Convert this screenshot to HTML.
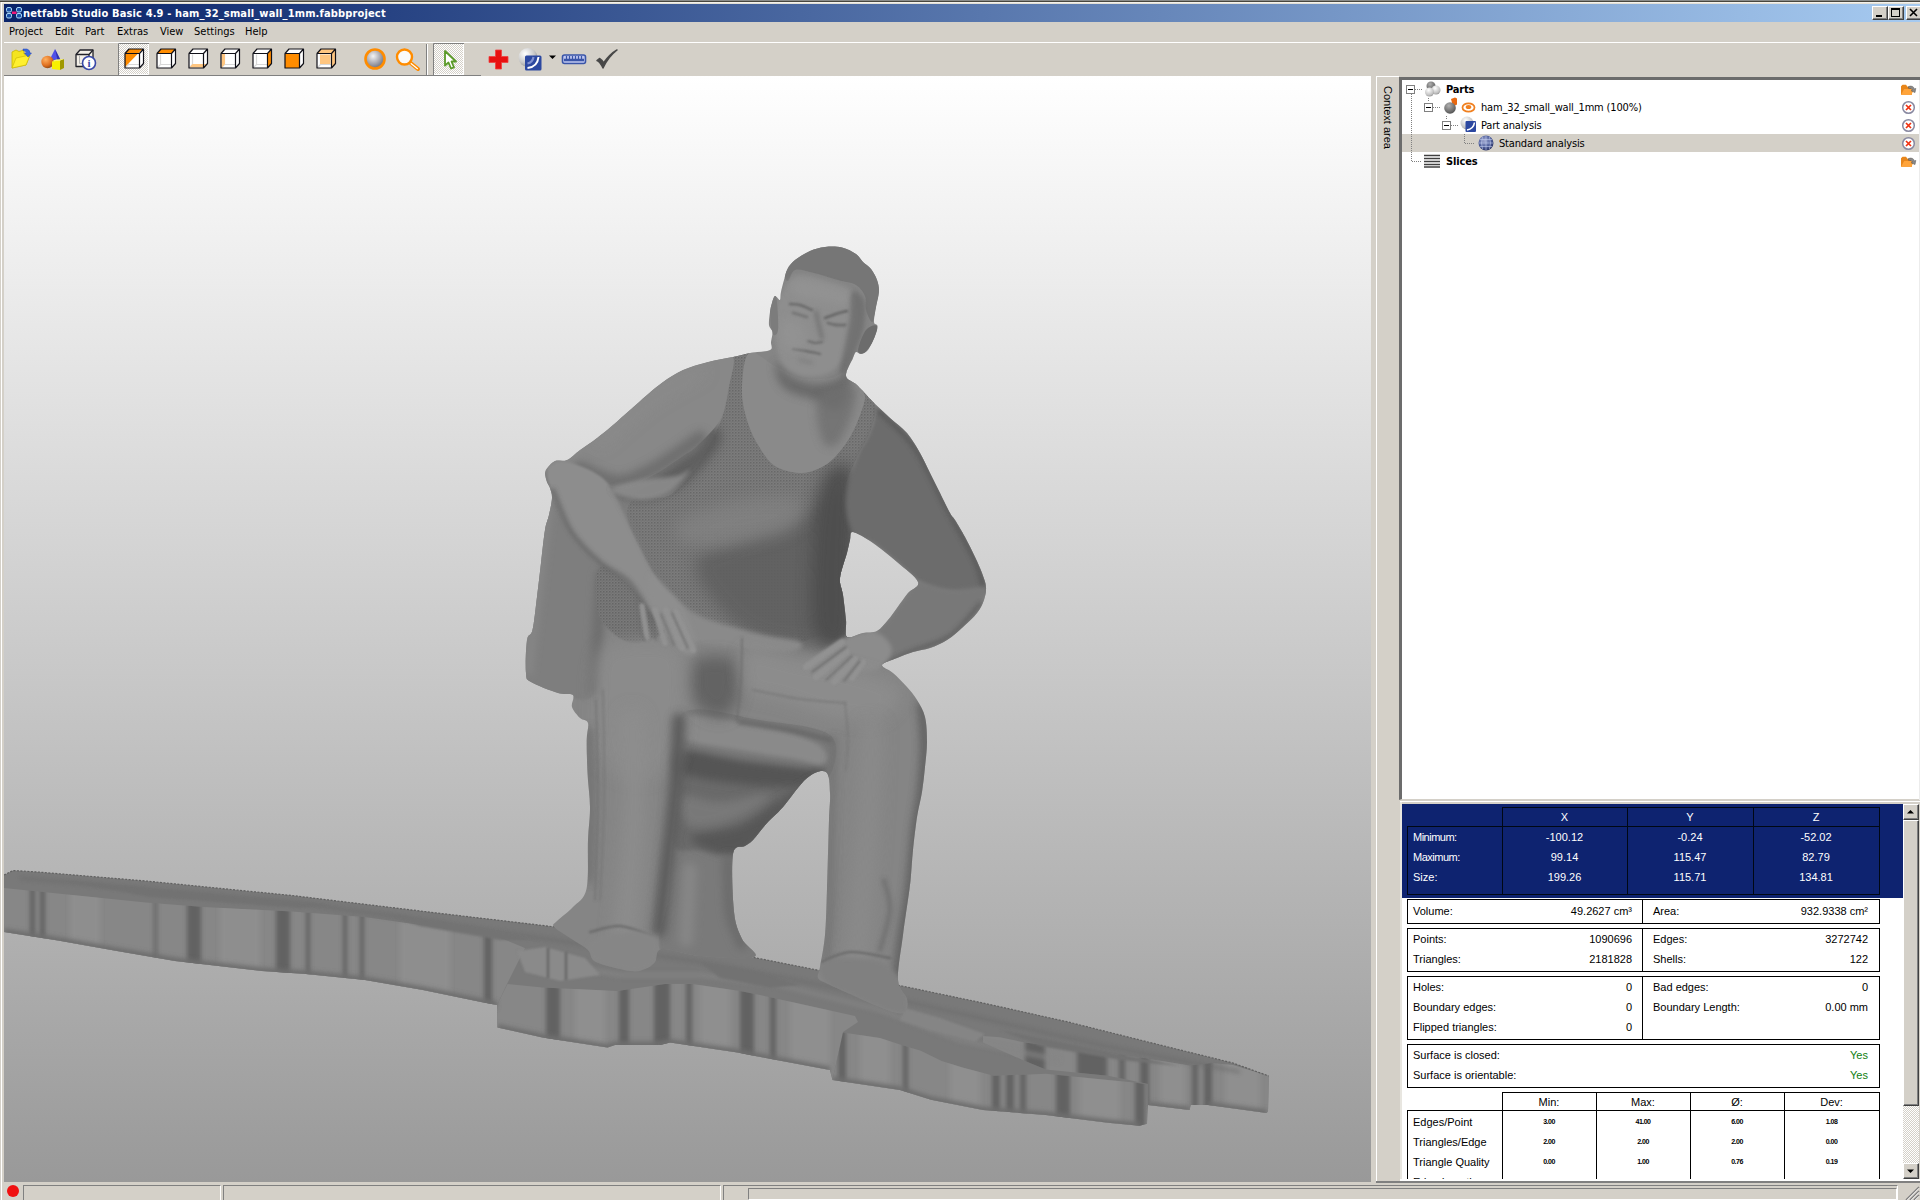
<!DOCTYPE html>
<html><head><meta charset="utf-8"><title>netfabb Studio Basic 4.9</title>
<style>
html,body{margin:0;padding:0}
body{width:1920px;height:1200px;overflow:hidden;background:#d4d0c8;position:relative;font-family:"DejaVu Sans Condensed","DejaVu Sans","Liberation Sans",sans-serif;font-size:11px;color:#000}
.a{position:absolute}
#title{left:4px;top:4px;width:1916px;height:18px;background:linear-gradient(90deg,#0a246a 0%,#0a246a 2%,#a6caf0 100%);color:#fff;font-weight:bold;font-size:11px;line-height:18px;white-space:nowrap}
#title span{position:absolute;left:19px;top:1px;letter-spacing:0.15px}
#menu{left:4px;top:22px;height:19px;line-height:20px;white-space:nowrap}
#menu span{position:absolute;top:0}
.wb{position:absolute;top:6px;width:16px;height:14px;background:#d4d0c8;box-sizing:border-box;border:1px solid;border-color:#fff #404040 #404040 #fff;box-shadow:inset -1px -1px 0 #808080}
#vp{left:4px;top:76px;width:1367px;height:1106px;background:linear-gradient(180deg,#ffffff 0%,#999999 100%);overflow:hidden}
#ctx{left:1376px;top:76px;width:23px;height:1106px;border-left:1px solid #fff;border-top:1px solid #fff;box-sizing:border-box}
#ctx span{position:absolute;left:5px;top:9px;writing-mode:vertical-rl;font-family:"Liberation Sans",sans-serif;font-size:11px;white-space:nowrap}
#tree{left:1399px;top:77px;width:521px;height:723px;background:#fff;box-sizing:border-box;border-left:3px solid #6c6c6c;border-top:3px solid #6c6c6c;border-bottom:1px solid #d4d0c8}
.row{position:absolute;left:0;width:518px;height:18px;line-height:20px;white-space:nowrap;letter-spacing:-0.16px}
.row b,.row span{position:absolute;top:0}
#ana{left:1402px;top:804px;width:501px;height:375px;background:#fff;overflow:hidden;font-family:"Liberation Sans",sans-serif;font-size:11px}
#ana div{position:absolute;box-sizing:border-box}
.bx{border:1px solid #000}
.t{white-space:nowrap;line-height:14px;height:14px}
.r{text-align:right}
.c{text-align:center}
.s{font-size:7px;font-weight:bold;letter-spacing:-0.5px}
#sb{left:1903px;top:804px;width:16px;height:375px;background:repeating-conic-gradient(#fff 0% 25%,#d4d0c8 0% 50%) 0 0/2px 2px}
.btn{position:absolute;left:0;width:16px;height:16px;background:#d4d0c8;box-sizing:border-box;border:1px solid;border-color:#fff #404040 #404040 #fff;box-shadow:inset -1px -1px 0 #808080}
.sunk{position:absolute;box-sizing:border-box;border:1px solid;border-color:#808080 #fff #fff #808080;height:17px;top:1184px}
</style></head><body>
<div class="a" style="left:0;top:0;width:1920px;height:1px;background:#8a8c8a"></div>
<div class="a" style="left:0;top:1px;width:1920px;height:1px;background:#48463e"></div>
<div class="a" style="left:1px;top:2px;width:1919px;height:1px;background:#f4f2ec"></div>
<div class="a" style="left:2px;top:3px;width:1918px;height:1px;background:#e2dfd6"></div>
<div class="a" style="left:1px;top:2px;width:1px;height:1198px;background:#fff"></div>
<div id="title" class="a"><span>netfabb Studio Basic 4.9 - ham_32_small_wall_1mm.fabbproject</span></div>
<svg class="a" style="left:6px;top:6px" width="17" height="14" viewBox="0 0 17 14"><g fill="#1c50a8" stroke="#a8d8f8" stroke-width="1"><rect x="0.5" y="1.5" width="5" height="4.5" rx="1.5"/><rect x="0.5" y="7.5" width="5" height="4.5" rx="1.5"/><rect x="10.5" y="1.5" width="5" height="4.5" rx="1.5"/><rect x="10.5" y="7.5" width="5" height="4.5" rx="1.5"/></g><rect x="6" y="5.5" width="4.5" height="2.5" fill="#f01878"/></svg><div class="wb" style="left:1872px"><svg width="14" height="12"><rect x="3" y="8" width="6" height="2" fill="#000"/></svg></div><div class="wb" style="left:1888px"><svg width="14" height="12"><rect x="2.5" y="1.5" width="8" height="8" fill="none" stroke="#000"/><rect x="2" y="1" width="9" height="2" fill="#000"/></svg></div><div class="wb" style="left:1906px"><svg width="14" height="12"><path d="M3,2 L10,9 M10,2 L3,9" stroke="#000" stroke-width="1.6"/></svg></div>
<div id="menu" class="a"><span style="left:5px">Project</span><span style="left:51px">Edit</span><span style="left:81px">Part</span><span style="left:113px">Extras</span><span style="left:156px">View</span><span style="left:190px">Settings</span><span style="left:241px">Help</span></div>
<div class="a" style="left:4px;top:42px;width:1916px;height:1px;background:#fff"></div>
<svg class="a" style="left:0;top:43px" width="700" height="33" viewBox="0 43 700 33"><defs><pattern id="chk" width="2" height="2" patternUnits="userSpaceOnUse"><rect width="2" height="2" fill="#fff"/><rect width="1" height="1" fill="#d4d0c8"/><rect x="1" y="1" width="1" height="1" fill="#d4d0c8"/></pattern><radialGradient id="gs" cx="0.4" cy="0.35" r="0.7"><stop offset="0" stop-color="#f4f4f4"/><stop offset="0.6" stop-color="#a0a0a8"/><stop offset="1" stop-color="#606878"/></radialGradient><radialGradient id="os" cx="0.35" cy="0.3" r="0.8"><stop offset="0" stop-color="#ffb060"/><stop offset="0.6" stop-color="#e07020"/><stop offset="1" stop-color="#804010"/></radialGradient><radialGradient id="ws" cx="0.35" cy="0.3" r="0.8"><stop offset="0" stop-color="#ffffff"/><stop offset="0.6" stop-color="#c8c8c8"/><stop offset="1" stop-color="#888"/></radialGradient></defs><rect x="118" y="43" width="31" height="32" fill="url(#chk)"/><path d="M118.5,75 V43.5 H149" stroke="#808080" fill="none"/><path d="M148.5,44 V74.5 H119" stroke="#fff" fill="none"/><rect x="433" y="43" width="31" height="32" fill="url(#chk)"/><path d="M433.5,75 V43.5 H464" stroke="#808080" fill="none"/><path d="M463.5,44 V74.5 H434" stroke="#fff" fill="none"/><path d="M12,52 l4,-2 l3,1.5 l5,-1.5 l0,4 l6,1 l-4,10 l-14,3 z" fill="#f4e420" stroke="#c8b400" stroke-width="0.8"/><path d="M12,68 l4,-10 l14,-3 l-4,10 z" fill="#fff030" stroke="#c8b400" stroke-width="0.6"/><path d="M23,49 l4,0 q3,1 3,4 l1.5,0 l-3.5,4 l-3.5,-4 l2,0 q0,-2 -3.5,-2.5 z" fill="#3a6ae0" stroke="#2040b0" stroke-width="0.5"/><path d="M55,49 l5.5,11 l-11,0 z" fill="#5050e8"/><path d="M55,49 l5.5,11 l-3,0 z" fill="#3030b0"/><circle cx="47.5" cy="62" r="6.2" fill="url(#os)"/><path d="M52,61.5 l8,-1 l0,9.5 l-8,-1 z" fill="#f8f000"/><path d="M60,60.5 l4,-1.5 v9 l-4,2 z" fill="#a09800"/><path d="M52,61.5 l4,-2 l8,-0.5 l-4,1.5z" fill="#fff860"/><path d="M76,54.5 l4,-4.5 h13 v12 l-4,4.5 h-13 z" fill="#f4f0e8" stroke="#202028" stroke-width="1.3" stroke-linejoin="round"/><path d="M76,54.5 h13 v12 M89,54.5 l4,-4.5" stroke="#202028" stroke-width="1.3" fill="none"/><path d="M79.5,56 v7.5 h9" stroke="#b0b0b0" fill="none"/><circle cx="89" cy="63" r="6.5" fill="#fff" stroke="#3848a8" stroke-width="1.6"/><text x="89" y="67" text-anchor="middle" font-family="Liberation Serif,serif" font-weight="bold" font-size="11" fill="#3848a8">i</text><path d="M125,53.5 l4,-4.5 h14.5 l-4,4.5 z" fill="#fff"/><path d="M139.5,53.5 l4,-4.5 v14.5 l-4,4.5 z" fill="#fff"/><path d="M125,53.5 h14.5 v14.5 h-14.5 z" fill="#fff"/><path d="M128.5,54.5 v10.0 h11.5 M128.5,64.5 l-3,3" stroke="#d8d8d8" stroke-width="1.2" fill="none"/><path d="M125,53.5 l4,-4.5 l13.5,0 L125,67.0 z" fill="#ff8c00"/><path d="M125,53.5 h14.5 v14.5 h-14.5 z M125,53.5 l4,-4.5 h14.5 v14.5 l-4,4.5 M139.5,53.5 l4,-4.5" stroke="#101018" stroke-width="1.2" fill="none" stroke-linejoin="round"/><path d="M157,53.5 l4,-4.5 h14.5 l-4,4.5 z" fill="#ff8c00"/><path d="M171.5,53.5 l4,-4.5 v14.5 l-4,4.5 z" fill="#fff"/><path d="M157,53.5 h14.5 v14.5 h-14.5 z" fill="#fff"/><path d="M160.5,54.5 v10.0 h11.5 M160.5,64.5 l-3,3" stroke="#d8d8d8" stroke-width="1.2" fill="none"/><path d="M157,53.5 h14.5 v14.5 h-14.5 z M157,53.5 l4,-4.5 h14.5 v14.5 l-4,4.5 M171.5,53.5 l4,-4.5" stroke="#101018" stroke-width="1.2" fill="none" stroke-linejoin="round"/><path d="M189,53.5 l4,-4.5 h14.5 l-4,4.5 z" fill="#fff"/><path d="M203.5,53.5 l4,-4.5 v14.5 l-4,4.5 z" fill="#fff"/><path d="M189,53.5 h14.5 v14.5 h-14.5 z" fill="#fff"/><path d="M192.5,54.5 v10.0 h11.5 M192.5,64.5 l-3,3" stroke="#d8d8d8" stroke-width="1.2" fill="none"/><path d="M189.5,67.5 l3,-3.5 h14.5 l-3,3.5 z" fill="#ffc680"/><path d="M189,53.5 h14.5 v14.5 h-14.5 z M189,53.5 l4,-4.5 h14.5 v14.5 l-4,4.5 M203.5,53.5 l4,-4.5" stroke="#101018" stroke-width="1.2" fill="none" stroke-linejoin="round"/><path d="M221,53.5 l4,-4.5 h14.5 l-4,4.5 z" fill="#fff"/><path d="M235.5,53.5 l4,-4.5 v14.5 l-4,4.5 z" fill="#fff"/><path d="M221,53.5 h14.5 v14.5 h-14.5 z" fill="#fff"/><path d="M224.5,54.5 v10.0 h11.5 M224.5,64.5 l-3,3" stroke="#d8d8d8" stroke-width="1.2" fill="none"/><path d="M221.5,54.0 l3.5,0 v10.0 l-3.5,4 z" fill="#ffc680"/><path d="M221,53.5 h14.5 v14.5 h-14.5 z M221,53.5 l4,-4.5 h14.5 v14.5 l-4,4.5 M235.5,53.5 l4,-4.5" stroke="#101018" stroke-width="1.2" fill="none" stroke-linejoin="round"/><path d="M253,53.5 l4,-4.5 h14.5 l-4,4.5 z" fill="#fff"/><path d="M267.5,53.5 l4,-4.5 v14.5 l-4,4.5 z" fill="#ff8c00"/><path d="M253,53.5 h14.5 v14.5 h-14.5 z" fill="#fff"/><path d="M256.5,54.5 v10.0 h11.5 M256.5,64.5 l-3,3" stroke="#d8d8d8" stroke-width="1.2" fill="none"/><path d="M253,53.5 h14.5 v14.5 h-14.5 z M253,53.5 l4,-4.5 h14.5 v14.5 l-4,4.5 M267.5,53.5 l4,-4.5" stroke="#101018" stroke-width="1.2" fill="none" stroke-linejoin="round"/><path d="M285,53.5 l4,-4.5 h14.5 l-4,4.5 z" fill="#fff"/><path d="M299.5,53.5 l4,-4.5 v14.5 l-4,4.5 z" fill="#fff"/><path d="M285,53.5 h14.5 v14.5 h-14.5 z" fill="#ff8c00"/><path d="M285,53.5 h14.5 v14.5 h-14.5 z M285,53.5 l4,-4.5 h14.5 v14.5 l-4,4.5 M299.5,53.5 l4,-4.5" stroke="#101018" stroke-width="1.2" fill="none" stroke-linejoin="round"/><path d="M317,53.5 l4,-4.5 h14.5 l-4,4.5 z" fill="#ffc680"/><path d="M331.5,53.5 l4,-4.5 v14.5 l-4,4.5 z" fill="#ffc680"/><path d="M317,53.5 h14.5 v14.5 h-14.5 z" fill="#fff"/><path d="M320.5,54.5 v10.0 h11.5 M320.5,64.5 l-3,3" stroke="#d8d8d8" stroke-width="1.2" fill="none"/><rect x="320" y="54.5" width="10.5" height="9.5" fill="#ffc680"/><path d="M317,53.5 h14.5 v14.5 h-14.5 z M317,53.5 l4,-4.5 h14.5 v14.5 l-4,4.5 M331.5,53.5 l4,-4.5" stroke="#101018" stroke-width="1.2" fill="none" stroke-linejoin="round"/><circle cx="375" cy="59" r="9.5" fill="url(#gs)" stroke="#ff8c00" stroke-width="2.6"/><path d="M410,62.5 L418,69" stroke="#ff8c00" stroke-width="4" stroke-linecap="round"/><path d="M411,63.5 L417.5,68.700" stroke="#fff" stroke-width="1.2" stroke-linecap="round"/><circle cx="404.5" cy="57" r="7.5" fill="#fafafa" stroke="#ff8c00" stroke-width="2.4"/><path d="M426.5,44 V75" stroke="#808080"/><path d="M427.5,44 V75" stroke="#fff"/><path d="M445,51 L445,65.5 L448.5,62.5 L451,68.5 L454,67.3 L451.5,61.5 L456,61.5 Z" fill="#fff" stroke="#5a9a28" stroke-width="1.8" stroke-linejoin="round"/><path d="M495.5,50 h6 v6.5 h6.5 v6 h-6.5 v6.5 h-6 v-6.5 h-6.5 v-6 h6.5 z" fill="#e81010" stroke="#f04040" stroke-width="0.8" stroke-linejoin="round"/><circle cx="528" cy="57.5" r="9.5" fill="url(#ws)"/><rect x="525" y="55.5" width="16.5" height="15" rx="1.5" fill="#2c48a0"/><path d="M527.5,68 q10,-1 11,-11" stroke="#fff" stroke-width="2" fill="none"/><path d="M527.5,63.5 q5,-1 6,-6.5" stroke="#8090d0" stroke-width="2.2" fill="none"/><path d="M549,55.5 h7 l-3.5,3.5 z" fill="#000"/><rect x="562.5" y="55" width="23" height="8.5" rx="2" fill="#c0c8f0" stroke="#3a55a8" stroke-width="1.6"/><path d="M564,60 h20" stroke="#3a55a8" stroke-width="2.5"/><path d="M566.5,56 v4 M569.5,56 v4 M572.5,56 v4 M575.5,56 v4 M578.5,56 v4 M581.5,56 v4" stroke="#3a55a8" stroke-width="1.2"/><path d="M597,60.5 q3,1 6,7.5 q5,-11 14,-18 q-7,4 -13.5,13 q-1.5,-3 -4,-4.5 z" fill="#484848" stroke="#484848" stroke-width="1.5" stroke-linejoin="round"/><path d="M4,75.5 H481" stroke="#808080"/></svg>
<div id="vp" class="a"><!--MODEL--><svg class="a" style="left:0;top:0" width="1367" height="1106" viewBox="4 76 1367 1106">
<defs>
<filter id="b1" filterUnits="userSpaceOnUse" x="0" y="60" width="1400" height="1140"><feGaussianBlur stdDeviation="1"/></filter>
<filter id="b2" filterUnits="userSpaceOnUse" x="0" y="60" width="1400" height="1140"><feGaussianBlur stdDeviation="2"/></filter>
<filter id="b4" filterUnits="userSpaceOnUse" x="0" y="60" width="1400" height="1140"><feGaussianBlur stdDeviation="4"/></filter>
<filter id="b8" filterUnits="userSpaceOnUse" x="0" y="60" width="1400" height="1140"><feGaussianBlur stdDeviation="8"/></filter>
<filter id="b12" filterUnits="userSpaceOnUse" x="0" y="60" width="1400" height="1140"><feGaussianBlur stdDeviation="12"/></filter>
<pattern id="tex" width="3" height="3" patternUnits="userSpaceOnUse"><rect width="3" height="3" fill="#808080"/><rect x="0" y="0" width="1.5" height="1.5" fill="#5a5a5a"/><rect x="1.5" y="1.5" width="1.5" height="1" fill="#6c6c6c"/></pattern>
</defs>
<linearGradient id="wg" x1="0" y1="0" x2="0" y2="1"><stop offset="0" stop-color="#8e8e8e"/><stop offset="0.7" stop-color="#8a8a8a"/><stop offset="1" stop-color="#7c7c7c"/></linearGradient>
<path d="M4.0,875.0L13.0,870.5L38.0,872.0L146.0,881.0L292.0,895.5L437.0,913.0L560.0,927.5L654.0,944.0L754.0,957.5L822.0,971.0L902.0,986.0L983.0,1003.0L1067.0,1021.7L1150.0,1042.5L1233.0,1063.0L1268.8,1076.0L1268.0,1111.0L1266.7,1113.0L1208.0,1105.0L1190.6,1105.0L1189.6,1110.0L1148.0,1105.0L1147.0,1123.8L1139.6,1125.8L1108.0,1122.7L1045.8,1115.0L983.0,1110.0L931.0,1099.8L900.0,1090.0L832.5,1080.0L830.0,1070.0L750.0,1055.0L737.5,1052.5L670.0,1042.5L660.0,1045.0L615.0,1045.0L607.5,1047.5L542.5,1037.5L497.5,1027.5L497.0,1005.0L481.0,1002.0L423.0,990.0L365.0,980.0L306.0,974.0L262.0,971.0L175.0,961.0L117.0,951.0L58.0,940.5L4.0,932.0Z" fill="#797979"/>
<clipPath id="cw"><path d="M4.0,888.0L146.0,902.5L204.0,907.0L292.0,911.5L365.0,917.0L496.0,936.0L525.0,948.0L507.0,984.0L497.0,1005.0L481.0,1002.0L423.0,990.0L365.0,980.0L306.0,974.0L262.0,971.0L175.0,961.0L117.0,951.0L58.0,940.5L4.0,932.0Z M507.5,984.0L542.5,987.5L617.5,991.0L665.0,984.0L692.5,984.0L740.0,991.0L760.0,995.0L855.0,1016.0L858.0,1022.0L843.0,1032.0L832.5,1080.0L830.0,1070.0L750.0,1055.0L737.5,1052.5L670.0,1042.5L660.0,1045.0L615.0,1045.0L607.5,1047.5L542.5,1037.5L497.5,1027.5L497.0,1005.0Z M983.0,1036.0L1000.0,1037.3L1025.0,1042.5L1073.0,1048.8L1116.7,1054.0L1150.0,1059.0L1189.6,1065.4L1212.5,1063.0L1233.0,1065.0L1268.8,1076.0L1268.0,1111.0L1266.7,1113.0L1208.0,1105.0L1190.6,1105.0L1189.6,1110.0L1148.0,1105.0L1148.0,1084.0L1129.0,1080.0L1108.0,1075.8L1045.8,1069.6L1025.0,1061.0L983.0,1042.5Z M843.0,1032.5L880.0,1038.0L900.0,1044.6L920.8,1050.8L941.7,1061.0L962.5,1067.5L993.8,1075.8L1045.8,1073.8L1108.0,1080.0L1129.0,1082.0L1145.8,1084.0L1147.0,1123.8L1139.6,1125.8L1108.0,1122.7L1045.8,1115.0L983.0,1110.0L931.0,1099.8L900.0,1090.0L832.5,1080.0Z"/></clipPath>
<clipPath id="cw0"><path d="M4.0,888.0L146.0,902.5L204.0,907.0L292.0,911.5L365.0,917.0L496.0,936.0L525.0,948.0L507.0,984.0L497.0,1005.0L481.0,1002.0L423.0,990.0L365.0,980.0L306.0,974.0L262.0,971.0L175.0,961.0L117.0,951.0L58.0,940.5L4.0,932.0Z"/></clipPath>
<path d="M4.0,888.0L146.0,902.5L204.0,907.0L292.0,911.5L365.0,917.0L496.0,936.0L525.0,948.0L507.0,984.0L497.0,1005.0L481.0,1002.0L423.0,990.0L365.0,980.0L306.0,974.0L262.0,971.0L175.0,961.0L117.0,951.0L58.0,940.5L4.0,932.0Z" fill="#878787"/><g clip-path="url(#cw0)"><g filter="url(#b2)"><rect x="30" y="880" width="5" height="130" fill="#5c5c5c" opacity="0.85"/><rect x="40" y="880" width="5" height="130" fill="#5c5c5c" opacity="0.85"/><rect x="154" y="880" width="3" height="130" fill="#5c5c5c" opacity="0.85"/><rect x="187" y="880" width="14" height="130" fill="#5c5c5c" opacity="0.85"/><rect x="276" y="880" width="14" height="130" fill="#5c5c5c" opacity="0.85"/><rect x="306" y="880" width="4" height="130" fill="#5c5c5c" opacity="0.85"/><rect x="343" y="880" width="4" height="130" fill="#5c5c5c" opacity="0.85"/><rect x="360" y="880" width="4" height="130" fill="#5c5c5c" opacity="0.85"/><rect x="484" y="880" width="8" height="130" fill="#5c5c5c" opacity="0.85"/><rect x="70" y="880" width="30" height="130" fill="#969696" opacity="0.5"/><rect x="220" y="880" width="40" height="130" fill="#969696" opacity="0.5"/><rect x="400" y="880" width="50" height="130" fill="#969696" opacity="0.5"/></g></g>
<clipPath id="cw1"><path d="M507.5,984.0L542.5,987.5L617.5,991.0L665.0,984.0L692.5,984.0L740.0,991.0L760.0,995.0L855.0,1016.0L858.0,1022.0L843.0,1032.0L832.5,1080.0L830.0,1070.0L750.0,1055.0L737.5,1052.5L670.0,1042.5L660.0,1045.0L615.0,1045.0L607.5,1047.5L542.5,1037.5L497.5,1027.5L497.0,1005.0Z"/></clipPath>
<path d="M507.5,984.0L542.5,987.5L617.5,991.0L665.0,984.0L692.5,984.0L740.0,991.0L760.0,995.0L855.0,1016.0L858.0,1022.0L843.0,1032.0L832.5,1080.0L830.0,1070.0L750.0,1055.0L737.5,1052.5L670.0,1042.5L660.0,1045.0L615.0,1045.0L607.5,1047.5L542.5,1037.5L497.5,1027.5L497.0,1005.0Z" fill="#878787"/><g clip-path="url(#cw1)"><g filter="url(#b2)"><rect x="546" y="975" width="14" height="110" fill="#5c5c5c" opacity="0.85"/><rect x="619" y="975" width="10" height="110" fill="#5c5c5c" opacity="0.85"/><rect x="654" y="975" width="16" height="110" fill="#5c5c5c" opacity="0.85"/><rect x="686" y="975" width="6" height="110" fill="#5c5c5c" opacity="0.85"/><rect x="740" y="975" width="14" height="110" fill="#5c5c5c" opacity="0.85"/><rect x="770" y="975" width="6" height="110" fill="#5c5c5c" opacity="0.85"/><rect x="575" y="975" width="30" height="110" fill="#969696" opacity="0.5"/><rect x="700" y="975" width="30" height="110" fill="#969696" opacity="0.5"/><rect x="790" y="975" width="40" height="110" fill="#969696" opacity="0.5"/></g></g>
<clipPath id="cw2"><path d="M983.0,1036.0L1000.0,1037.3L1025.0,1042.5L1073.0,1048.8L1116.7,1054.0L1150.0,1059.0L1189.6,1065.4L1212.5,1063.0L1233.0,1065.0L1268.8,1076.0L1268.0,1111.0L1266.7,1113.0L1208.0,1105.0L1190.6,1105.0L1189.6,1110.0L1148.0,1105.0L1148.0,1084.0L1129.0,1080.0L1108.0,1075.8L1045.8,1069.6L1025.0,1061.0L983.0,1042.5Z"/></clipPath>
<path d="M983.0,1036.0L1000.0,1037.3L1025.0,1042.5L1073.0,1048.8L1116.7,1054.0L1150.0,1059.0L1189.6,1065.4L1212.5,1063.0L1233.0,1065.0L1268.8,1076.0L1268.0,1111.0L1266.7,1113.0L1208.0,1105.0L1190.6,1105.0L1189.6,1110.0L1148.0,1105.0L1148.0,1084.0L1129.0,1080.0L1108.0,1075.8L1045.8,1069.6L1025.0,1061.0L983.0,1042.5Z" fill="#878787"/><g clip-path="url(#cw2)"><g filter="url(#b2)"><rect x="1025" y="1030" width="20" height="90" fill="#5c5c5c" opacity="0.85"/><rect x="1077" y="1030" width="30" height="90" fill="#5c5c5c" opacity="0.85"/><rect x="1119" y="1030" width="6" height="90" fill="#5c5c5c" opacity="0.85"/><rect x="1140" y="1030" width="9" height="90" fill="#5c5c5c" opacity="0.85"/><rect x="1192" y="1030" width="6" height="90" fill="#5c5c5c" opacity="0.85"/><rect x="1204" y="1030" width="8" height="90" fill="#5c5c5c" opacity="0.85"/><rect x="1160" y="1030" width="25" height="90" fill="#969696" opacity="0.5"/><rect x="1225" y="1030" width="35" height="90" fill="#969696" opacity="0.5"/></g></g>
<clipPath id="cw3"><path d="M843.0,1032.5L880.0,1038.0L900.0,1044.6L920.8,1050.8L941.7,1061.0L962.5,1067.5L993.8,1075.8L1045.8,1073.8L1108.0,1080.0L1129.0,1082.0L1145.8,1084.0L1147.0,1123.8L1139.6,1125.8L1108.0,1122.7L1045.8,1115.0L983.0,1110.0L931.0,1099.8L900.0,1090.0L832.5,1080.0Z"/></clipPath>
<path d="M843.0,1032.5L880.0,1038.0L900.0,1044.6L920.8,1050.8L941.7,1061.0L962.5,1067.5L993.8,1075.8L1045.8,1073.8L1108.0,1080.0L1129.0,1082.0L1145.8,1084.0L1147.0,1123.8L1139.6,1125.8L1108.0,1122.7L1045.8,1115.0L983.0,1110.0L931.0,1099.8L900.0,1090.0L832.5,1080.0Z" fill="#878787"/><g clip-path="url(#cw3)"><g filter="url(#b2)"><rect x="838" y="1030" width="8" height="100" fill="#5c5c5c" opacity="0.85"/><rect x="903" y="1030" width="5" height="100" fill="#5c5c5c" opacity="0.85"/><rect x="992" y="1030" width="8" height="100" fill="#5c5c5c" opacity="0.85"/><rect x="1006" y="1030" width="8" height="100" fill="#5c5c5c" opacity="0.85"/><rect x="1020" y="1030" width="6" height="100" fill="#5c5c5c" opacity="0.85"/><rect x="1056" y="1030" width="14" height="100" fill="#5c5c5c" opacity="0.85"/><rect x="1135" y="1030" width="10" height="100" fill="#5c5c5c" opacity="0.85"/><rect x="860" y="1030" width="30" height="100" fill="#969696" opacity="0.5"/><rect x="950" y="1030" width="30" height="100" fill="#969696" opacity="0.5"/><rect x="1080" y="1030" width="40" height="100" fill="#969696" opacity="0.5"/></g></g>
<g clip-path="url(#cw)"><path d="M4,932L58,940.5L117,951L175,961L262,971L306,974L365,980L423,990L481,1002L497,1005 M497.5,1027.5L542.5,1037.5L607.5,1047.5L615,1045L660,1045L670,1042.5L737.5,1052.5L750,1055L830,1070 M832.5,1080L900,1090L931,1099.8L983,1110L1045.8,1115L1108,1122.7L1139.6,1125.8 M1148,1105L1189.6,1110 M1208,1105L1266.7,1113" stroke="#6e6e6e" stroke-width="7" fill="none" filter="url(#b2)"/></g>
<g filter="url(#b2)" opacity="0.7"><path d="M20,878L300,903L520,935L700,962L900,1000L1100,1045L1240,1072" stroke="#6c6c6c" stroke-width="3" fill="none"/><path d="M530,960L620,975L700,975L780,985L880,1010L960,1040L1060,1060" stroke="#858585" stroke-width="5" fill="none"/></g>
<g filter="url(#b1)"><path d="M517,951L545,947L585,958L600,975L560,981L525,972Z" fill="#8a8a8a"/><path d="M548,948v30M566,952v28" stroke="#666" stroke-width="2.5"/><path d="M905,1008L940,1018L985,1034L975,1042L930,1030L900,1020Z" fill="#858585"/><path d="M700,962L760,972L800,985L770,988L720,978Z" fill="#727272"/><path d="M60,880L200,893L330,905L300,908L150,897Z" fill="#727272"/><path d="M380,912L470,926L540,940L500,940L420,926Z" fill="#737373"/><path d="M1000,1030L1080,1046L1180,1066L1120,1060L1040,1046Z" fill="#727272"/></g>
<path d="M4,875L13,870.5L38,872L146,881L292,895.5L437,913L560,927.5L654,944L754,957.5L822,971L902,986L983,1003L1067,1021.7L1150,1042.5L1233,1063L1268.75,1076" stroke="#606060" stroke-width="1.2" fill="none" stroke-dasharray="2,1.5"/>
<path d="M825.0,247.0C830.3,246.4 836.8,246.3 842.0,247.5C847.2,248.7 852.5,251.6 856.0,254.0C859.5,256.4 860.5,259.5 863.0,262.0C865.5,264.5 868.7,266.0 871.0,269.0C873.3,272.0 875.7,276.2 877.0,280.0C878.3,283.8 879.2,287.5 879.0,292.0C878.8,296.5 876.8,302.0 876.0,307.0C875.2,312.0 873.8,318.8 874.0,322.0C874.2,325.2 877.3,323.7 877.5,326.0C877.7,328.3 876.6,332.0 875.0,336.0C873.4,340.0 870.3,347.0 868.0,350.0C865.7,353.0 863.0,353.7 861.0,354.0C859.0,354.3 857.3,351.3 856.0,352.0C854.7,352.7 854.7,354.0 853.0,358.0C851.3,362.0 845.3,371.5 846.0,376.0C846.7,380.5 852.5,380.7 857.0,385.0C861.5,389.3 867.5,396.5 873.0,402.0C878.5,407.5 884.3,412.8 890.0,418.0C895.7,423.2 902.0,427.2 907.0,433.0C912.0,438.8 916.2,446.3 920.0,453.0C923.8,459.7 926.7,466.3 930.0,473.0C933.3,479.7 936.7,486.3 940.0,493.0C943.3,499.7 947.5,508.5 950.0,513.0C952.5,517.5 952.5,516.0 955.0,520.0C957.5,524.0 961.7,530.8 965.0,537.0C968.3,543.2 972.2,551.0 975.0,557.0C977.8,563.0 980.2,568.0 982.0,573.0C983.8,578.0 985.7,582.5 986.0,587.0C986.3,591.5 985.5,595.7 984.0,600.0C982.5,604.3 980.5,608.5 977.0,613.0C973.5,617.5 968.0,622.5 963.0,627.0C958.0,631.5 952.5,636.5 947.0,640.0C941.5,643.5 935.7,646.0 930.0,648.0C924.3,650.0 918.5,650.3 913.0,652.0C907.5,653.7 902.2,655.8 897.0,658.0C891.8,660.2 882.7,662.5 882.0,665.0C881.3,667.5 888.8,669.3 893.0,673.0C897.2,676.7 903.0,682.5 907.0,687.0C911.0,691.5 914.0,695.0 917.0,700.0C920.0,705.0 923.3,710.0 925.0,717.0C926.7,724.0 927.0,733.7 927.0,742.0C927.0,750.3 925.8,758.7 925.0,767.0C924.2,775.3 923.3,783.7 922.0,792.0C920.7,800.3 918.5,807.3 917.0,817.0C915.5,826.7 914.0,840.3 913.0,850.0C912.0,859.7 911.6,868.5 911.0,875.0C910.4,881.5 910.8,879.0 909.5,889.0C908.2,899.0 904.9,919.8 903.0,935.0C901.1,950.2 897.3,969.3 898.0,980.0C898.7,990.7 905.8,993.7 907.0,999.0C908.2,1004.3 907.3,1009.8 905.0,1012.0C902.7,1014.2 898.8,1013.5 893.0,1012.0C887.2,1010.5 877.2,1006.0 870.0,1003.0C862.8,1000.0 857.0,997.2 850.0,994.0C843.0,990.8 833.3,986.7 828.0,984.0C822.7,981.3 819.3,980.8 818.0,978.0C816.7,975.2 818.8,974.2 820.0,967.0C821.2,959.8 823.8,948.0 825.0,935.0C826.2,922.0 826.3,908.2 827.0,889.0C827.7,869.8 828.5,836.0 829.0,820.0C829.5,804.0 830.5,801.0 830.0,793.0C829.5,785.0 829.8,774.5 826.0,772.0C822.2,769.5 814.2,772.2 807.0,778.0C799.8,783.8 789.7,799.5 783.0,807.0C776.3,814.5 772.0,817.5 767.0,823.0C762.0,828.5 756.7,836.2 753.0,840.0C749.3,843.8 748.3,843.7 745.0,846.0C741.7,848.3 734.8,843.0 733.0,854.0C731.2,865.0 732.5,897.8 734.0,912.0C735.5,926.2 738.7,931.5 742.0,939.0C745.3,946.5 761.0,954.2 754.0,957.0C747.0,959.8 715.3,957.3 700.0,956.0C684.7,954.7 669.5,948.0 662.0,949.0C654.5,950.0 657.8,958.7 655.0,962.0C652.2,965.3 649.2,967.5 645.0,969.0C640.8,970.5 638.2,972.2 630.0,971.0C621.8,969.8 603.0,965.5 596.0,962.0C589.0,958.5 592.3,954.0 588.0,950.0C583.7,946.0 575.7,941.8 570.0,938.0C564.3,934.2 556.2,929.8 554.0,927.0C551.8,924.2 553.8,924.3 557.0,921.0C560.2,917.7 568.1,912.3 573.0,907.0C577.9,901.7 584.0,900.2 586.5,889.0C589.0,877.8 587.4,853.7 588.0,840.0C588.6,826.3 590.1,818.2 590.0,807.0C589.9,795.8 588.0,784.2 587.5,773.0C587.0,761.8 586.6,748.3 586.7,740.0C586.8,731.7 589.1,726.7 588.0,723.0C586.9,719.3 582.7,720.7 580.0,718.0C577.3,715.3 573.2,710.8 572.0,707.0C570.8,703.2 575.3,697.3 573.0,695.0C570.7,692.7 565.0,695.2 558.0,693.0C551.0,690.8 536.3,685.3 531.0,682.0C525.7,678.7 526.7,680.0 526.0,673.0C525.3,666.0 525.9,647.2 527.0,640.0C528.1,632.8 530.8,637.2 532.5,630.0C534.2,622.8 535.6,608.2 537.0,597.0C538.4,585.8 539.7,574.2 541.0,563.0C542.3,551.8 543.7,538.0 545.0,530.0C546.3,522.0 547.8,520.3 549.0,515.0C550.2,509.7 551.8,502.5 552.0,498.0C552.2,493.5 550.8,490.7 550.0,488.0C549.2,485.3 547.8,484.5 547.0,482.0C546.2,479.5 544.8,475.5 545.0,473.0C545.2,470.5 546.3,469.0 548.0,467.0C549.7,465.0 551.8,462.2 555.0,461.0C558.2,459.8 562.8,461.8 567.0,460.0C571.2,458.2 575.0,453.7 580.0,450.0C585.0,446.3 591.5,442.2 597.0,438.0C602.5,433.8 607.5,429.7 613.0,425.0C618.5,420.3 624.3,415.0 630.0,410.0C635.7,405.0 641.5,399.7 647.0,395.0C652.5,390.3 657.0,386.2 663.0,382.0C669.0,377.8 675.5,373.3 683.0,370.0C690.5,366.7 699.7,364.2 708.0,362.0C716.3,359.8 726.0,358.5 733.0,357.0C740.0,355.5 743.8,354.2 750.0,353.0C756.2,351.8 766.5,351.8 770.0,350.0C773.5,348.2 770.6,345.0 771.0,342.0C771.4,339.0 772.8,334.8 772.5,332.0C772.2,329.2 769.4,328.3 769.0,325.0C768.6,321.7 769.5,315.7 770.0,312.0C770.5,308.3 771.2,305.7 772.0,303.0C772.8,300.3 773.7,296.5 775.0,296.0C776.3,295.5 779.0,300.7 780.0,300.0C781.0,299.3 780.3,295.3 781.0,292.0C781.7,288.7 782.9,283.8 784.0,280.0C785.1,276.2 785.7,272.3 787.5,269.0C789.3,265.7 791.2,263.0 795.0,260.0C798.8,257.0 805.0,253.2 810.0,251.0C815.0,248.8 819.7,247.6 825.0,247.0Z M853.0,532.0C856.8,532.5 865.7,538.0 873.0,543.0C880.3,548.0 889.5,555.5 897.0,562.0C904.5,568.5 916.2,576.8 918.0,582.0C919.8,587.2 911.5,588.7 908.0,593.0C904.5,597.3 900.3,603.5 897.0,608.0C893.7,612.5 891.3,616.2 888.0,620.0C884.7,623.8 881.2,628.8 877.0,631.0C872.8,633.2 868.0,632.0 863.0,633.0C858.0,634.0 849.8,639.2 847.0,637.0C844.2,634.8 846.7,627.0 846.0,620.0C845.3,613.0 844.0,602.0 843.0,595.0C842.0,588.0 839.3,585.0 840.0,578.0C840.7,571.0 845.3,559.3 847.0,553.0C848.7,546.7 849.0,543.5 850.0,540.0C851.0,536.5 849.2,531.5 853.0,532.0Z" fill="#858585" fill-rule="evenodd"/>
<clipPath id="cf"><path d="M825.0,247.0C830.3,246.4 836.8,246.3 842.0,247.5C847.2,248.7 852.5,251.6 856.0,254.0C859.5,256.4 860.5,259.5 863.0,262.0C865.5,264.5 868.7,266.0 871.0,269.0C873.3,272.0 875.7,276.2 877.0,280.0C878.3,283.8 879.2,287.5 879.0,292.0C878.8,296.5 876.8,302.0 876.0,307.0C875.2,312.0 873.8,318.8 874.0,322.0C874.2,325.2 877.3,323.7 877.5,326.0C877.7,328.3 876.6,332.0 875.0,336.0C873.4,340.0 870.3,347.0 868.0,350.0C865.7,353.0 863.0,353.7 861.0,354.0C859.0,354.3 857.3,351.3 856.0,352.0C854.7,352.7 854.7,354.0 853.0,358.0C851.3,362.0 845.3,371.5 846.0,376.0C846.7,380.5 852.5,380.7 857.0,385.0C861.5,389.3 867.5,396.5 873.0,402.0C878.5,407.5 884.3,412.8 890.0,418.0C895.7,423.2 902.0,427.2 907.0,433.0C912.0,438.8 916.2,446.3 920.0,453.0C923.8,459.7 926.7,466.3 930.0,473.0C933.3,479.7 936.7,486.3 940.0,493.0C943.3,499.7 947.5,508.5 950.0,513.0C952.5,517.5 952.5,516.0 955.0,520.0C957.5,524.0 961.7,530.8 965.0,537.0C968.3,543.2 972.2,551.0 975.0,557.0C977.8,563.0 980.2,568.0 982.0,573.0C983.8,578.0 985.7,582.5 986.0,587.0C986.3,591.5 985.5,595.7 984.0,600.0C982.5,604.3 980.5,608.5 977.0,613.0C973.5,617.5 968.0,622.5 963.0,627.0C958.0,631.5 952.5,636.5 947.0,640.0C941.5,643.5 935.7,646.0 930.0,648.0C924.3,650.0 918.5,650.3 913.0,652.0C907.5,653.7 902.2,655.8 897.0,658.0C891.8,660.2 882.7,662.5 882.0,665.0C881.3,667.5 888.8,669.3 893.0,673.0C897.2,676.7 903.0,682.5 907.0,687.0C911.0,691.5 914.0,695.0 917.0,700.0C920.0,705.0 923.3,710.0 925.0,717.0C926.7,724.0 927.0,733.7 927.0,742.0C927.0,750.3 925.8,758.7 925.0,767.0C924.2,775.3 923.3,783.7 922.0,792.0C920.7,800.3 918.5,807.3 917.0,817.0C915.5,826.7 914.0,840.3 913.0,850.0C912.0,859.7 911.6,868.5 911.0,875.0C910.4,881.5 910.8,879.0 909.5,889.0C908.2,899.0 904.9,919.8 903.0,935.0C901.1,950.2 897.3,969.3 898.0,980.0C898.7,990.7 905.8,993.7 907.0,999.0C908.2,1004.3 907.3,1009.8 905.0,1012.0C902.7,1014.2 898.8,1013.5 893.0,1012.0C887.2,1010.5 877.2,1006.0 870.0,1003.0C862.8,1000.0 857.0,997.2 850.0,994.0C843.0,990.8 833.3,986.7 828.0,984.0C822.7,981.3 819.3,980.8 818.0,978.0C816.7,975.2 818.8,974.2 820.0,967.0C821.2,959.8 823.8,948.0 825.0,935.0C826.2,922.0 826.3,908.2 827.0,889.0C827.7,869.8 828.5,836.0 829.0,820.0C829.5,804.0 830.5,801.0 830.0,793.0C829.5,785.0 829.8,774.5 826.0,772.0C822.2,769.5 814.2,772.2 807.0,778.0C799.8,783.8 789.7,799.5 783.0,807.0C776.3,814.5 772.0,817.5 767.0,823.0C762.0,828.5 756.7,836.2 753.0,840.0C749.3,843.8 748.3,843.7 745.0,846.0C741.7,848.3 734.8,843.0 733.0,854.0C731.2,865.0 732.5,897.8 734.0,912.0C735.5,926.2 738.7,931.5 742.0,939.0C745.3,946.5 761.0,954.2 754.0,957.0C747.0,959.8 715.3,957.3 700.0,956.0C684.7,954.7 669.5,948.0 662.0,949.0C654.5,950.0 657.8,958.7 655.0,962.0C652.2,965.3 649.2,967.5 645.0,969.0C640.8,970.5 638.2,972.2 630.0,971.0C621.8,969.8 603.0,965.5 596.0,962.0C589.0,958.5 592.3,954.0 588.0,950.0C583.7,946.0 575.7,941.8 570.0,938.0C564.3,934.2 556.2,929.8 554.0,927.0C551.8,924.2 553.8,924.3 557.0,921.0C560.2,917.7 568.1,912.3 573.0,907.0C577.9,901.7 584.0,900.2 586.5,889.0C589.0,877.8 587.4,853.7 588.0,840.0C588.6,826.3 590.1,818.2 590.0,807.0C589.9,795.8 588.0,784.2 587.5,773.0C587.0,761.8 586.6,748.3 586.7,740.0C586.8,731.7 589.1,726.7 588.0,723.0C586.9,719.3 582.7,720.7 580.0,718.0C577.3,715.3 573.2,710.8 572.0,707.0C570.8,703.2 575.3,697.3 573.0,695.0C570.7,692.7 565.0,695.2 558.0,693.0C551.0,690.8 536.3,685.3 531.0,682.0C525.7,678.7 526.7,680.0 526.0,673.0C525.3,666.0 525.9,647.2 527.0,640.0C528.1,632.8 530.8,637.2 532.5,630.0C534.2,622.8 535.6,608.2 537.0,597.0C538.4,585.8 539.7,574.2 541.0,563.0C542.3,551.8 543.7,538.0 545.0,530.0C546.3,522.0 547.8,520.3 549.0,515.0C550.2,509.7 551.8,502.5 552.0,498.0C552.2,493.5 550.8,490.7 550.0,488.0C549.2,485.3 547.8,484.5 547.0,482.0C546.2,479.5 544.8,475.5 545.0,473.0C545.2,470.5 546.3,469.0 548.0,467.0C549.7,465.0 551.8,462.2 555.0,461.0C558.2,459.8 562.8,461.8 567.0,460.0C571.2,458.2 575.0,453.7 580.0,450.0C585.0,446.3 591.5,442.2 597.0,438.0C602.5,433.8 607.5,429.7 613.0,425.0C618.5,420.3 624.3,415.0 630.0,410.0C635.7,405.0 641.5,399.7 647.0,395.0C652.5,390.3 657.0,386.2 663.0,382.0C669.0,377.8 675.5,373.3 683.0,370.0C690.5,366.7 699.7,364.2 708.0,362.0C716.3,359.8 726.0,358.5 733.0,357.0C740.0,355.5 743.8,354.2 750.0,353.0C756.2,351.8 766.5,351.8 770.0,350.0C773.5,348.2 770.6,345.0 771.0,342.0C771.4,339.0 772.8,334.8 772.5,332.0C772.2,329.2 769.4,328.3 769.0,325.0C768.6,321.7 769.5,315.7 770.0,312.0C770.5,308.3 771.2,305.7 772.0,303.0C772.8,300.3 773.7,296.5 775.0,296.0C776.3,295.5 779.0,300.7 780.0,300.0C781.0,299.3 780.3,295.3 781.0,292.0C781.7,288.7 782.9,283.8 784.0,280.0C785.1,276.2 785.7,272.3 787.5,269.0C789.3,265.7 791.2,263.0 795.0,260.0C798.8,257.0 805.0,253.2 810.0,251.0C815.0,248.8 819.7,247.6 825.0,247.0Z M853.0,532.0C856.8,532.5 865.7,538.0 873.0,543.0C880.3,548.0 889.5,555.5 897.0,562.0C904.5,568.5 916.2,576.8 918.0,582.0C919.8,587.2 911.5,588.7 908.0,593.0C904.5,597.3 900.3,603.5 897.0,608.0C893.7,612.5 891.3,616.2 888.0,620.0C884.7,623.8 881.2,628.8 877.0,631.0C872.8,633.2 868.0,632.0 863.0,633.0C858.0,634.0 849.8,639.2 847.0,637.0C844.2,634.8 846.7,627.0 846.0,620.0C845.3,613.0 844.0,602.0 843.0,595.0C842.0,588.0 839.3,585.0 840.0,578.0C840.7,571.0 845.3,559.3 847.0,553.0C848.7,546.7 849.0,543.5 850.0,540.0C851.0,536.5 849.2,531.5 853.0,532.0Z" clip-rule="evenodd"/></clipPath>
<g clip-path="url(#cf)"><path d="M548.0,470.0C558.0,457.5 584.7,480.0 600.0,485.0C615.3,490.0 638.0,485.8 640.0,500.0C642.0,514.2 618.7,546.7 612.0,570.0C605.3,593.3 603.0,619.2 600.0,640.0C597.0,660.8 600.7,685.8 594.0,695.0C587.3,704.2 571.0,697.2 560.0,695.0C549.0,692.8 534.0,687.8 528.0,682.0C522.0,676.2 522.0,680.3 524.0,660.0C526.0,639.7 536.0,591.7 540.0,560.0C544.0,528.3 538.0,482.5 548.0,470.0Z" fill="#7e7e7e" filter="url(#b1)"/><path d="M549.0,500.0C547.7,510.5 543.7,541.3 541.0,563.0C538.3,584.7 535.2,611.8 533.0,630.0C530.8,648.2 528.8,665.0 528.0,672.0" fill="none" stroke="#8a8a8a" stroke-width="6" stroke-linecap="round" filter="url(#b4)"/><path d="M602.0,575.0C600.7,594.2 595.3,670.8 594.0,690.0" fill="none" stroke="#6e6e6e" stroke-width="12" stroke-linecap="round" filter="url(#b4)"/><path d="M684.0,712.0C697.3,703.7 735.7,716.2 760.0,720.0C784.3,723.8 818.3,725.8 830.0,735.0C841.7,744.2 834.2,767.2 830.0,775.0C825.8,782.8 812.8,776.2 805.0,782.0C797.2,787.8 790.5,801.0 783.0,810.0C775.5,819.0 768.0,828.8 760.0,836.0C752.0,843.2 739.0,840.3 735.0,853.0C731.0,865.7 734.3,897.5 736.0,912.0C737.7,926.5 741.7,932.3 745.0,940.0C748.3,947.7 763.5,955.0 756.0,958.0C748.5,961.0 716.0,959.3 700.0,958.0C684.0,956.7 665.3,959.7 660.0,950.0C654.7,940.3 666.0,916.7 668.0,900.0C670.0,883.3 670.0,871.7 672.0,850.0C674.0,828.3 678.0,793.0 680.0,770.0C682.0,747.0 670.7,720.3 684.0,712.0Z" fill="#7a7a7a"/><path d="M680.0,756.0C690.3,750.0 720.0,761.7 740.0,764.0C760.0,766.3 785.7,768.7 800.0,770.0C814.3,771.3 825.2,769.7 826.0,772.0C826.8,774.3 812.2,777.7 805.0,784.0C797.8,790.3 790.5,801.3 783.0,810.0C775.5,818.7 768.0,828.8 760.0,836.0C752.0,843.2 745.0,850.7 735.0,853.0C725.0,855.3 710.2,851.2 700.0,850.0C689.8,848.8 677.7,854.3 674.0,846.0C670.3,837.7 677.0,815.0 678.0,800.0C679.0,785.0 669.7,762.0 680.0,756.0Z" fill="#6a6a6a" filter="url(#b2)"/><path d="M680.0,750.0C690.0,748.0 720.0,757.0 740.0,760.0C760.0,763.0 785.7,766.3 800.0,768.0C814.3,769.7 825.2,767.0 826.0,770.0C826.8,773.0 819.3,783.7 805.0,786.0C790.7,788.3 760.8,786.3 740.0,784.0C719.2,781.7 690.0,777.7 680.0,772.0C670.0,766.3 670.0,752.0 680.0,750.0Z" fill="#545454" filter="url(#b4)"/><path d="M690.0,838.0C689.7,842.7 721.3,859.3 738.0,854.0C754.7,848.7 776.7,818.7 790.0,806.0C803.3,793.3 819.7,779.0 818.0,778.0C816.3,777.0 793.0,792.0 780.0,800.0C767.0,808.0 755.0,819.7 740.0,826.0C725.0,832.3 690.3,833.3 690.0,838.0Z" fill="#565656" filter="url(#b4)"/><path d="M680.0,796.0C685.0,792.0 705.0,802.3 720.0,802.0C735.0,801.7 767.0,791.3 770.0,794.0C773.0,796.7 751.3,812.7 738.0,818.0C724.7,823.3 699.7,829.7 690.0,826.0C680.3,822.3 675.0,800.0 680.0,796.0Z" fill="#7a7a7a" filter="url(#b4)" opacity="0.9"/><path d="M684.0,716.0C693.7,713.3 720.7,718.7 740.0,722.0C759.3,725.3 785.7,731.0 800.0,736.0C814.3,741.0 822.3,747.3 826.0,752.0C829.7,756.7 828.0,763.0 822.0,764.0C816.0,765.0 803.7,760.3 790.0,758.0C776.3,755.7 758.0,753.3 740.0,750.0C722.0,746.7 691.3,743.7 682.0,738.0C672.7,732.3 674.3,718.7 684.0,716.0Z" fill="#8a8a8a" filter="url(#b2)"/><path d="M728.0,860.0C728.3,868.7 727.7,897.8 730.0,912.0C732.3,926.2 740.0,939.5 742.0,945.0" fill="none" stroke="#6a6a6a" stroke-width="10" stroke-linecap="round" filter="url(#b4)"/><path d="M690.0,870.0C689.3,881.7 686.7,928.3 686.0,940.0" fill="none" stroke="#868686" stroke-width="14" stroke-linecap="round" filter="url(#b4)"/><path d="M733.0,357.0C736.2,352.2 747.5,347.5 749.0,353.0C750.5,358.5 742.2,378.3 742.0,390.0C741.8,401.7 745.0,413.3 748.0,423.0C751.0,432.7 755.5,440.8 760.0,448.0C764.5,455.2 768.3,461.8 775.0,466.0C781.7,470.2 792.5,472.7 800.0,473.0C807.5,473.3 814.2,470.7 820.0,468.0C825.8,465.3 830.0,462.2 835.0,457.0C840.0,451.8 845.8,444.0 850.0,437.0C854.2,430.0 857.5,421.7 860.0,415.0C862.5,408.3 865.0,401.5 865.0,397.0C865.0,392.5 858.3,386.7 860.0,388.0C861.7,389.3 873.3,397.7 875.0,405.0C876.7,412.3 873.0,423.3 870.0,432.0C867.0,440.7 861.0,447.8 857.0,457.0C853.0,466.2 847.2,476.5 846.0,487.0C844.8,497.5 849.3,511.2 850.0,520.0C850.7,528.8 851.3,530.8 850.0,540.0C848.7,549.2 842.8,561.7 842.0,575.0C841.2,588.3 844.0,609.2 845.0,620.0C846.0,630.8 852.2,637.3 848.0,640.0C843.8,642.7 829.7,635.3 820.0,636.0C810.3,636.7 803.3,644.3 790.0,644.0C776.7,643.7 754.0,637.3 740.0,634.0C726.0,630.7 717.3,627.7 706.0,624.0C694.7,620.3 680.5,619.3 672.0,612.0C663.5,604.7 660.3,590.0 655.0,580.0C649.7,570.0 644.5,562.0 640.0,552.0C635.5,542.0 629.2,528.7 628.0,520.0C626.8,511.3 626.8,503.8 633.0,500.0C639.2,496.2 657.8,498.7 665.0,497.0C672.2,495.3 671.5,494.0 676.0,490.0C680.5,486.0 686.7,480.0 692.0,473.0C697.3,466.0 702.8,457.7 708.0,448.0C713.2,438.3 719.3,426.0 723.0,415.0C726.7,404.0 728.3,391.7 730.0,382.0C731.7,372.3 729.8,361.8 733.0,357.0Z" fill="#787878"/><path d="M733.0,357.0C736.2,352.2 747.5,347.5 749.0,353.0C750.5,358.5 742.2,378.3 742.0,390.0C741.8,401.7 745.0,413.3 748.0,423.0C751.0,432.7 755.5,440.8 760.0,448.0C764.5,455.2 768.3,461.8 775.0,466.0C781.7,470.2 792.5,472.7 800.0,473.0C807.5,473.3 814.2,470.7 820.0,468.0C825.8,465.3 830.0,462.2 835.0,457.0C840.0,451.8 845.8,444.0 850.0,437.0C854.2,430.0 857.5,421.7 860.0,415.0C862.5,408.3 865.0,401.5 865.0,397.0C865.0,392.5 858.3,386.7 860.0,388.0C861.7,389.3 873.3,397.7 875.0,405.0C876.7,412.3 873.0,423.3 870.0,432.0C867.0,440.7 861.0,447.8 857.0,457.0C853.0,466.2 847.2,476.5 846.0,487.0C844.8,497.5 849.3,511.2 850.0,520.0C850.7,528.8 851.3,530.8 850.0,540.0C848.7,549.2 842.8,561.7 842.0,575.0C841.2,588.3 844.0,609.2 845.0,620.0C846.0,630.8 852.2,637.3 848.0,640.0C843.8,642.7 829.7,635.3 820.0,636.0C810.3,636.7 803.3,644.3 790.0,644.0C776.7,643.7 754.0,637.3 740.0,634.0C726.0,630.7 717.3,627.7 706.0,624.0C694.7,620.3 680.5,619.3 672.0,612.0C663.5,604.7 660.3,590.0 655.0,580.0C649.7,570.0 644.5,562.0 640.0,552.0C635.5,542.0 629.2,528.7 628.0,520.0C626.8,511.3 626.8,503.8 633.0,500.0C639.2,496.2 657.8,498.7 665.0,497.0C672.2,495.3 671.5,494.0 676.0,490.0C680.5,486.0 686.7,480.0 692.0,473.0C697.3,466.0 702.8,457.7 708.0,448.0C713.2,438.3 719.3,426.0 723.0,415.0C726.7,404.0 728.3,391.7 730.0,382.0C731.7,372.3 729.8,361.8 733.0,357.0Z" fill="url(#tex)" opacity="0.55"/><path d="M800.0,515.0C818.3,507.5 841.3,487.5 850.0,495.0C858.7,502.5 852.7,535.8 852.0,560.0C851.3,584.2 856.3,626.0 846.0,640.0C835.7,654.0 808.5,646.7 790.0,644.0C771.5,641.3 750.8,637.2 735.0,624.0C719.2,610.8 694.2,579.0 695.0,565.0C695.8,551.0 722.5,548.3 740.0,540.0C757.5,531.7 781.7,522.5 800.0,515.0Z" fill="#5e5e5e" filter="url(#b8)" opacity="0.85"/><path d="M822.0,480.0C828.7,465.0 847.0,456.7 852.0,470.0C857.0,483.3 852.7,531.7 852.0,560.0C851.3,588.3 854.2,627.7 848.0,640.0C841.8,652.3 821.0,647.3 815.0,634.0C809.0,620.7 810.8,585.7 812.0,560.0C813.2,534.3 815.3,495.0 822.0,480.0Z" fill="#4e4e4e" filter="url(#b8)" opacity="0.95"/><path d="M600.0,568.0C607.3,560.0 630.0,550.0 640.0,552.0C650.0,554.0 654.7,570.0 660.0,580.0C665.3,590.0 671.7,603.0 672.0,612.0C672.3,621.0 669.0,629.0 662.0,634.0C655.0,639.0 639.7,643.7 630.0,642.0C620.3,640.3 609.7,631.0 604.0,624.0C598.3,617.0 596.7,609.3 596.0,600.0C595.3,590.7 592.7,576.0 600.0,568.0Z" fill="#727272" filter="url(#b1)"/><path d="M600.0,568.0C607.3,560.0 630.0,550.0 640.0,552.0C650.0,554.0 654.7,570.0 660.0,580.0C665.3,590.0 671.7,603.0 672.0,612.0C672.3,621.0 669.0,629.0 662.0,634.0C655.0,639.0 639.7,643.7 630.0,642.0C620.3,640.3 609.7,631.0 604.0,624.0C598.3,617.0 596.7,609.3 596.0,600.0C595.3,590.7 592.7,576.0 600.0,568.0Z" fill="url(#tex)" opacity="0.55"/><path d="M680.0,520.0C690.0,513.3 720.0,503.3 740.0,500.0C760.0,496.7 791.7,495.0 800.0,500.0C808.3,505.0 803.3,522.5 790.0,530.0C776.7,537.5 738.3,543.3 720.0,545.0C701.7,546.7 686.7,544.2 680.0,540.0C673.3,535.8 670.0,526.7 680.0,520.0Z" fill="#828282" filter="url(#b8)" opacity="0.8"/><path d="M662.0,590.0C668.0,589.3 683.7,608.7 700.0,616.0C716.3,623.3 743.3,629.7 760.0,634.0C776.7,638.3 795.0,639.0 800.0,642.0C805.0,645.0 800.0,651.0 790.0,652.0C780.0,653.0 756.7,650.0 740.0,648.0C723.3,646.0 702.7,644.7 690.0,640.0C677.3,635.3 668.7,628.3 664.0,620.0C659.3,611.7 656.0,590.7 662.0,590.0Z" fill="#8a8a8a" filter="url(#b2)"/><path d="M749.0,353.0C754.5,349.0 766.5,361.8 775.0,366.0C783.5,370.2 790.8,376.0 800.0,378.0C809.2,380.0 822.0,379.0 830.0,378.0C838.0,377.0 843.0,370.3 848.0,372.0C853.0,373.7 857.2,383.8 860.0,388.0C862.8,392.2 865.0,392.5 865.0,397.0C865.0,401.5 862.5,408.3 860.0,415.0C857.5,421.7 854.2,430.0 850.0,437.0C845.8,444.0 840.0,451.8 835.0,457.0C830.0,462.2 825.8,465.3 820.0,468.0C814.2,470.7 807.5,473.3 800.0,473.0C792.5,472.7 781.7,470.2 775.0,466.0C768.3,461.8 764.5,455.2 760.0,448.0C755.5,440.8 751.0,432.7 748.0,423.0C745.0,413.3 741.8,401.7 742.0,390.0C742.2,378.3 743.5,357.0 749.0,353.0Z" fill="#8a8a8a"/><path d="M776.0,362.0C778.0,361.3 783.5,372.3 790.0,376.0C796.5,379.7 806.7,383.7 815.0,384.0C823.3,384.3 833.8,382.0 840.0,378.0C846.2,374.0 850.3,358.8 852.0,360.0C853.7,361.2 852.3,376.7 850.0,385.0C847.7,393.3 843.8,407.5 838.0,410.0C832.2,412.5 823.0,403.0 815.0,400.0C807.0,397.0 796.2,395.3 790.0,392.0C783.8,388.7 780.3,385.0 778.0,380.0C775.7,375.0 774.0,362.7 776.0,362.0Z" fill="#666666" filter="url(#b4)" opacity="0.9"/><path d="M818.0,400.0C822.0,390.8 839.7,386.3 846.0,385.0C852.3,383.7 855.3,386.2 856.0,392.0C856.7,397.8 853.3,411.2 850.0,420.0C846.7,428.8 840.7,441.7 836.0,445.0C831.3,448.3 825.0,447.5 822.0,440.0C819.0,432.5 814.0,409.2 818.0,400.0Z" fill="#707070" filter="url(#b4)" opacity="0.8"/><path d="M784.5,272.5C785.7,268.8 789.8,262.6 795.0,258.5C800.2,254.4 807.8,250.1 816.0,248.0C824.2,245.9 835.8,244.8 844.0,246.0C852.2,247.2 859.5,250.6 865.0,255.0C870.5,259.4 874.7,266.7 877.0,272.5C879.3,278.3 879.2,283.6 879.0,290.0C878.8,296.4 876.7,305.7 875.5,311.0C874.3,316.3 873.6,322.2 872.0,322.0C870.4,321.8 867.2,314.3 866.0,310.0C864.8,305.7 866.7,300.2 865.0,296.0C863.3,291.8 860.5,287.7 856.0,285.0C851.5,282.3 845.3,282.1 838.0,280.0C830.7,277.9 819.2,274.2 812.0,272.5C804.8,270.8 799.0,268.6 795.0,270.0C791.0,271.4 789.8,280.6 788.0,281.0C786.2,281.4 783.3,276.2 784.5,272.5Z" fill="#767676"/><path d="M786.0,285.0C790.0,279.2 792.7,275.5 800.0,275.0C807.3,274.5 821.3,279.2 830.0,282.0C838.7,284.8 847.3,285.7 852.0,292.0C856.7,298.3 858.3,310.3 858.0,320.0C857.7,329.7 854.7,341.3 850.0,350.0C845.3,358.7 837.5,367.7 830.0,372.0C822.5,376.3 812.5,377.0 805.0,376.0C797.5,375.0 789.8,371.2 785.0,366.0C780.2,360.8 777.5,354.3 776.0,345.0C774.5,335.7 774.3,320.0 776.0,310.0C777.7,300.0 782.0,290.8 786.0,285.0Z" fill="#8e8e8e" filter="url(#b2)"/><path d="M790.0,304.0C791.7,304.2 796.3,304.0 800.0,305.0C803.7,306.0 810.0,309.2 812.0,310.0" fill="none" stroke="#666666" stroke-width="2.4" stroke-linecap="round" filter="url(#b1)" opacity="0.9"/><path d="M793.0,313.0C794.2,313.3 797.7,314.3 800.0,315.0C802.3,315.7 805.8,316.7 807.0,317.0" fill="none" stroke="#6e6e6e" stroke-width="2.6" stroke-linecap="round" filter="url(#b1)" opacity="0.8"/><path d="M825.0,318.0C826.8,317.3 832.3,315.2 836.0,314.0C839.7,312.8 845.2,311.5 847.0,311.0" fill="none" stroke="#626262" stroke-width="2.6" stroke-linecap="round" filter="url(#b1)" opacity="0.9"/><path d="M828.0,323.0C829.3,323.3 833.2,324.7 836.0,325.0C838.8,325.3 843.5,325.0 845.0,325.0" fill="none" stroke="#686868" stroke-width="2.8" stroke-linecap="round" filter="url(#b1)" opacity="0.85"/><path d="M816.0,312.0C816.5,314.3 818.0,321.7 819.0,326.0C820.0,330.3 821.5,336.0 822.0,338.0" fill="none" stroke="#707070" stroke-width="3.5" stroke-linecap="round" filter="url(#b2)" opacity="0.9"/><path d="M808.0,341.0C809.2,341.3 812.7,342.8 815.0,343.0C817.3,343.2 820.8,342.2 822.0,342.0" fill="none" stroke="#686868" stroke-width="2.2" stroke-linecap="round" filter="url(#b1)" opacity="0.9"/><path d="M793.0,349.0C795.2,349.3 801.5,350.2 806.0,351.0C810.5,351.8 817.7,353.5 820.0,354.0" fill="none" stroke="#626262" stroke-width="1.8" stroke-linecap="round" filter="url(#b1)" opacity="0.9"/><path d="M800.0,360.0C802.0,360.5 810.0,362.5 812.0,363.0" fill="none" stroke="#7a7a7a" stroke-width="2.5" stroke-linecap="round" filter="url(#b2)" opacity="0.8"/><path d="M796.0,280.0C802.0,278.7 821.0,283.3 830.0,286.0C839.0,288.7 847.3,293.0 850.0,296.0C852.7,299.0 851.0,303.3 846.0,304.0C841.0,304.7 828.7,301.7 820.0,300.0C811.3,298.3 798.0,297.3 794.0,294.0C790.0,290.7 790.0,281.3 796.0,280.0Z" fill="#949494" filter="url(#b4)" opacity="0.7"/><path d="M782.0,320.0C785.0,316.2 796.0,318.7 800.0,322.0C804.0,325.3 806.7,335.0 806.0,340.0C805.3,345.0 800.0,351.2 796.0,352.0C792.0,352.8 784.3,350.3 782.0,345.0C779.7,339.7 779.0,323.8 782.0,320.0Z" fill="#949494" filter="url(#b4)" opacity="0.6"/><path d="M852.0,292.0C854.3,289.0 862.0,294.5 864.0,300.0C866.0,305.5 865.0,317.5 864.0,325.0C863.0,332.5 860.7,337.8 858.0,345.0C855.3,352.2 851.0,363.5 848.0,368.0C845.0,372.5 840.3,376.7 840.0,372.0C839.7,367.3 844.3,349.0 846.0,340.0C847.7,331.0 849.0,326.0 850.0,318.0C851.0,310.0 849.7,295.0 852.0,292.0Z" fill="#6e6e6e" filter="url(#b2)" opacity="0.85"/><path d="M770.0,300.0C770.7,294.0 774.7,291.0 776.0,296.0C777.3,301.0 778.7,324.0 778.0,330.0C777.3,336.0 773.3,337.0 772.0,332.0C770.7,327.0 769.3,306.0 770.0,300.0Z" fill="#7c7c7c"/><path d="M866.0,330.0C869.2,326.0 875.7,324.3 877.0,326.0C878.3,327.7 876.2,335.5 874.0,340.0C871.8,344.5 866.7,351.3 864.0,353.0C861.3,354.7 857.7,353.8 858.0,350.0C858.3,346.2 862.8,334.0 866.0,330.0Z" fill="#6c6c6c"/><path d="M580.0,474.0C582.8,474.0 605.3,489.2 617.0,490.0C628.7,490.8 639.0,484.5 650.0,479.0C661.0,473.5 675.2,462.3 683.0,457.0C690.8,451.7 692.2,452.3 697.0,447.0C701.8,441.7 707.8,426.2 712.0,425.0C716.2,423.8 724.0,432.5 722.0,440.0C720.0,447.5 707.7,461.7 700.0,470.0C692.3,478.3 686.0,485.0 676.0,490.0C666.0,495.0 652.7,500.0 640.0,500.0C627.3,500.0 610.0,494.3 600.0,490.0C590.0,485.7 577.2,474.0 580.0,474.0Z" fill="#5c5c5c" filter="url(#b4)" opacity="0.9"/><path d="M555.0,461.0C558.2,459.3 562.8,461.8 567.0,460.0C571.2,458.2 575.0,453.7 580.0,450.0C585.0,446.3 591.5,442.2 597.0,438.0C602.5,433.8 607.5,429.7 613.0,425.0C618.5,420.3 624.3,415.0 630.0,410.0C635.7,405.0 641.5,399.7 647.0,395.0C652.5,390.3 657.0,386.2 663.0,382.0C669.0,377.8 675.5,373.3 683.0,370.0C690.5,366.7 699.7,364.2 708.0,362.0C716.3,359.8 729.7,352.3 733.0,357.0C736.3,361.7 730.2,379.5 728.0,390.0C725.8,400.5 725.2,410.7 720.0,420.0C714.8,429.3 703.2,440.0 697.0,446.0C690.8,452.0 690.8,450.8 683.0,456.0C675.2,461.2 661.0,471.7 650.0,477.0C639.0,482.3 628.7,488.7 617.0,488.0C605.3,487.3 589.5,475.0 580.0,473.0C570.5,471.0 565.3,476.5 560.0,476.0C554.7,475.5 548.8,472.5 548.0,470.0C547.2,467.5 551.8,462.7 555.0,461.0Z" fill="#888888"/><path d="M580.0,468.0C586.2,470.3 605.3,481.5 617.0,482.0C628.7,482.5 639.0,476.3 650.0,471.0C661.0,465.7 674.7,455.5 683.0,450.0C691.3,444.5 697.2,440.0 700.0,438.0" fill="none" stroke="#666666" stroke-width="14" stroke-linecap="round" filter="url(#b4)" opacity="0.75"/><path d="M600.0,442.0C608.3,435.0 633.3,411.7 650.0,400.0C666.7,388.3 691.7,376.7 700.0,372.0" fill="none" stroke="#8e8e8e" stroke-width="10" stroke-linecap="round" filter="url(#b8)" opacity="0.7"/><path d="M548.0,470.0C550.2,464.8 557.3,461.0 566.0,462.0C574.7,463.0 591.3,469.7 600.0,476.0C608.7,482.3 612.3,490.2 618.0,500.0C623.7,509.8 627.8,522.5 634.0,535.0C640.2,547.5 648.7,564.2 655.0,575.0C661.3,585.8 666.2,589.2 672.0,600.0C677.8,610.8 688.0,631.3 690.0,640.0C692.0,648.7 689.0,654.3 684.0,652.0C679.0,649.7 669.0,637.2 660.0,626.0C651.0,614.8 640.0,595.7 630.0,585.0C620.0,574.3 609.7,570.8 600.0,562.0C590.3,553.2 579.8,543.5 572.0,532.0C564.2,520.5 557.0,503.3 553.0,493.0C549.0,482.7 545.8,475.2 548.0,470.0Z" fill="#8d8d8d" filter="url(#b1)"/><path d="M553.0,490.0C556.2,497.0 564.2,520.0 572.0,532.0C579.8,544.0 590.3,553.5 600.0,562.0C609.7,570.5 620.8,573.0 630.0,583.0C639.2,593.0 650.8,615.5 655.0,622.0" fill="none" stroke="#686868" stroke-width="4" stroke-linecap="round" filter="url(#b2)" opacity="0.9"/><path d="M612.0,488.0C615.0,493.7 623.7,509.7 630.0,522.0C636.3,534.3 643.7,550.3 650.0,562.0C656.3,573.7 665.0,587.0 668.0,592.0" fill="none" stroke="#7a7a7a" stroke-width="3" stroke-linecap="round" filter="url(#b2)" opacity="0.8"/><path d="M610.0,490.0C610.0,486.7 629.0,482.3 640.0,480.0C651.0,477.7 667.7,477.7 676.0,476.0C684.3,474.3 691.0,467.3 690.0,470.0C689.0,472.7 678.3,487.0 670.0,492.0C661.7,497.0 650.0,500.3 640.0,500.0C630.0,499.7 610.0,493.3 610.0,490.0Z" fill="#8c8c8c" filter="url(#b2)" opacity="0.9"/><path d="M860.0,388.0C859.7,387.2 868.0,397.0 873.0,402.0C878.0,407.0 884.3,412.8 890.0,418.0C895.7,423.2 902.0,427.2 907.0,433.0C912.0,438.8 916.2,446.3 920.0,453.0C923.8,459.7 926.7,466.3 930.0,473.0C933.3,479.7 936.7,486.3 940.0,493.0C943.3,499.7 945.8,505.7 950.0,513.0C954.2,520.3 960.8,529.7 965.0,537.0C969.2,544.3 972.2,551.0 975.0,557.0C977.8,563.0 980.2,568.0 982.0,573.0C983.8,578.0 989.7,583.8 986.0,587.0C982.3,590.2 970.2,592.3 960.0,592.0C949.8,591.7 935.5,590.0 925.0,585.0C914.5,580.0 905.7,569.0 897.0,562.0C888.3,555.0 880.3,548.0 873.0,543.0C865.7,538.0 857.5,539.2 853.0,532.0C848.5,524.8 845.3,512.5 846.0,500.0C846.7,487.5 853.0,468.3 857.0,457.0C861.0,445.7 867.0,440.3 870.0,432.0C873.0,423.7 876.7,414.3 875.0,407.0C873.3,399.7 860.3,388.8 860.0,388.0Z" fill="#6c6c6c" filter="url(#b2)"/><path d="M880.0,412.0C885.8,418.0 904.2,432.5 915.0,448.0C925.8,463.5 935.0,486.3 945.0,505.0C955.0,523.7 968.5,545.8 975.0,560.0C981.5,574.2 982.5,585.0 984.0,590.0" fill="none" stroke="#5a5a5a" stroke-width="5" stroke-linecap="round" filter="url(#b2)" opacity="0.9"/><path d="M986.0,587.0C991.7,588.7 985.5,595.7 984.0,600.0C982.5,604.3 980.5,608.5 977.0,613.0C973.5,617.5 968.0,622.5 963.0,627.0C958.0,631.5 952.5,636.5 947.0,640.0C941.5,643.5 935.7,646.0 930.0,648.0C924.3,650.0 918.5,650.3 913.0,652.0C907.5,653.7 902.2,655.8 897.0,658.0C891.8,660.2 886.5,666.3 882.0,665.0C877.5,663.7 870.8,655.7 870.0,650.0C869.2,644.3 874.0,636.0 877.0,631.0C880.0,626.0 884.7,623.8 888.0,620.0C891.3,616.2 893.7,612.5 897.0,608.0C900.3,603.5 904.5,597.3 908.0,593.0C911.5,588.7 911.0,582.5 918.0,582.0C925.0,581.5 938.7,589.2 950.0,590.0C961.3,590.8 980.3,585.3 986.0,587.0Z" fill="#787878" filter="url(#b2)"/><path d="M980.0,604.0C975.0,609.3 961.7,628.0 950.0,636.0C938.3,644.0 921.0,647.3 910.0,652.0C899.0,656.7 888.3,662.0 884.0,664.0" fill="none" stroke="#5e5e5e" stroke-width="4" stroke-linecap="round" filter="url(#b2)" opacity="0.9"/><path d="M846.0,637.0C852.3,634.2 857.3,633.5 863.0,633.0C868.7,632.5 875.2,631.2 880.0,634.0C884.8,636.8 892.0,644.3 892.0,650.0C892.0,655.7 885.3,664.3 880.0,668.0C874.7,671.7 867.5,670.0 860.0,672.0C852.5,674.0 842.5,680.0 835.0,680.0C827.5,680.0 820.0,674.7 815.0,672.0C810.0,669.3 803.3,667.7 805.0,664.0C806.7,660.3 818.2,654.5 825.0,650.0C831.8,645.5 839.7,639.8 846.0,637.0Z" fill="#8c8c8c" filter="url(#b2)"/><path d="M694.0,662.0C698.3,656.3 708.7,655.7 716.0,656.0C723.3,656.3 734.3,657.3 738.0,664.0C741.7,670.7 740.0,687.3 738.0,696.0C736.0,704.7 731.7,713.3 726.0,716.0C720.3,718.7 710.0,716.3 704.0,712.0C698.0,707.7 691.7,698.3 690.0,690.0C688.3,681.7 689.7,667.7 694.0,662.0Z" fill="#5a5a5a" filter="url(#b8)" opacity="0.8"/><path d="M600.0,652.0C607.7,642.0 626.7,640.7 640.0,640.0C653.3,639.3 672.3,639.7 680.0,648.0C687.7,656.3 686.7,671.3 686.0,690.0C685.3,708.7 683.7,745.0 676.0,760.0C668.3,775.0 652.7,780.0 640.0,780.0C627.3,780.0 607.7,773.3 600.0,760.0C592.3,746.7 594.0,718.0 594.0,700.0C594.0,682.0 592.3,662.0 600.0,652.0Z" fill="#8c8c8c" filter="url(#b8)" opacity="0.8"/><path d="M746.0,650.0C755.0,645.0 781.0,656.3 800.0,660.0C819.0,663.7 843.3,667.0 860.0,672.0C876.7,677.0 896.7,682.0 900.0,690.0C903.3,698.0 891.7,715.7 880.0,720.0C868.3,724.3 846.7,719.3 830.0,716.0C813.3,712.7 794.0,704.3 780.0,700.0C766.0,695.7 751.7,698.3 746.0,690.0C740.3,681.7 737.0,655.0 746.0,650.0Z" fill="#8e8e8e" filter="url(#b8)" opacity="0.8"/><path d="M650.0,575.0C653.0,573.3 662.3,584.2 668.0,590.0C673.7,595.8 679.7,602.3 684.0,610.0C688.3,617.7 692.0,629.0 694.0,636.0C696.0,643.0 697.3,649.0 696.0,652.0C694.7,655.0 690.0,656.0 686.0,654.0C682.0,652.0 675.7,645.3 672.0,640.0C668.3,634.7 667.7,628.7 664.0,622.0C660.3,615.3 652.3,607.8 650.0,600.0C647.7,592.2 647.0,576.7 650.0,575.0Z" fill="#8e8e8e" filter="url(#b2)"/><path d="M922.0,705.0C922.5,711.7 925.0,730.8 925.0,745.0C925.0,759.2 923.5,775.8 922.0,790.0C920.5,804.2 918.0,813.3 916.0,830.0C914.0,846.7 912.3,871.7 910.0,890.0C907.7,908.3 904.0,925.8 902.0,940.0C900.0,954.2 898.7,969.2 898.0,975.0" fill="none" stroke="#5c5c5c" stroke-width="9" stroke-linecap="round" filter="url(#b4)" opacity="0.95"/><path d="M834.0,740.0C833.5,753.3 831.7,793.3 831.0,820.0C830.3,846.7 830.8,876.7 830.0,900.0C829.2,923.3 826.7,950.0 826.0,960.0" fill="none" stroke="#707070" stroke-width="7" stroke-linecap="round" filter="url(#b4)" opacity="0.85"/><path d="M872.0,730.0C871.3,745.0 869.7,791.7 868.0,820.0C866.3,848.3 864.0,875.0 862.0,900.0C860.0,925.0 857.0,958.3 856.0,970.0" fill="none" stroke="#8c8c8c" stroke-width="22" stroke-linecap="round" filter="url(#b8)" opacity="0.75"/><path d="M884.0,880.0C885.0,885.0 890.7,898.3 890.0,910.0C889.3,921.7 881.7,943.3 880.0,950.0" fill="none" stroke="#6a6a6a" stroke-width="4" stroke-linecap="round" filter="url(#b2)" opacity="0.8"/><path d="M589.0,730.0C589.3,741.7 591.0,775.0 591.0,800.0C591.0,825.0 589.3,866.7 589.0,880.0" fill="none" stroke="#686868" stroke-width="6" stroke-linecap="round" filter="url(#b4)" opacity="0.9"/><path d="M596.0,700.0C596.3,716.7 598.2,766.7 598.0,800.0C597.8,833.3 595.5,883.3 595.0,900.0" fill="none" stroke="#707070" stroke-width="1.5" stroke-linecap="round" filter="url(#b1)" opacity="0.8"/><path d="M603.0,690.0C603.2,708.3 604.5,765.0 604.0,800.0C603.5,835.0 600.7,883.3 600.0,900.0" fill="none" stroke="#747474" stroke-width="1.5" stroke-linecap="round" filter="url(#b1)" opacity="0.7"/><path d="M679.0,720.0C678.3,731.7 677.0,766.7 675.0,790.0C673.0,813.3 669.7,836.7 667.0,860.0C664.3,883.3 660.3,918.3 659.0,930.0" fill="none" stroke="#5c5c5c" stroke-width="14" stroke-linecap="round" filter="url(#b4)" opacity="0.95"/><path d="M632.0,720.0C632.3,733.3 634.3,773.3 634.0,800.0C633.7,826.7 631.7,856.7 630.0,880.0C628.3,903.3 625.0,930.0 624.0,940.0" fill="none" stroke="#8e8e8e" stroke-width="24" stroke-linecap="round" filter="url(#b8)" opacity="0.8"/><path d="M590.0,932.0C595.0,931.0 609.7,925.3 620.0,926.0C630.3,926.7 646.7,934.3 652.0,936.0" fill="none" stroke="#606060" stroke-width="2" stroke-linecap="round" filter="url(#b1)" opacity="0.8"/><path d="M822.0,962.0C826.7,960.3 838.7,952.7 850.0,952.0C861.3,951.3 883.3,957.0 890.0,958.0" fill="none" stroke="#606060" stroke-width="2" stroke-linecap="round" filter="url(#b1)" opacity="0.8"/><path d="M642.0,606.0C642.8,611.3 646.2,632.7 647.0,638.0" fill="none" stroke="#939393" stroke-width="5.5" stroke-linecap="round" filter="url(#b1)" opacity="0.95"/><path d="M655.0,610.0C656.7,615.5 663.3,637.5 665.0,643.0" fill="none" stroke="#939393" stroke-width="5.5" stroke-linecap="round" filter="url(#b1)" opacity="0.95"/><path d="M666.0,610.0C668.7,616.3 679.3,641.7 682.0,648.0" fill="none" stroke="#939393" stroke-width="5.5" stroke-linecap="round" filter="url(#b1)" opacity="0.95"/><path d="M676.0,612.0C678.8,618.3 690.2,643.7 693.0,650.0" fill="none" stroke="#939393" stroke-width="5.5" stroke-linecap="round" filter="url(#b1)" opacity="0.95"/><path d="M649.0,614.0C650.2,618.3 654.8,635.7 656.0,640.0" fill="none" stroke="#6c6c6c" stroke-width="1.6" stroke-linecap="round" filter="url(#b1)" opacity="0.8"/><path d="M661.0,614.0C663.2,619.2 671.8,639.8 674.0,645.0" fill="none" stroke="#6c6c6c" stroke-width="1.6" stroke-linecap="round" filter="url(#b1)" opacity="0.8"/><path d="M672.0,613.0C674.7,618.8 685.3,642.2 688.0,648.0" fill="none" stroke="#6c6c6c" stroke-width="1.6" stroke-linecap="round" filter="url(#b1)" opacity="0.8"/><path d="M636.0,600.0C636.7,605.0 638.5,623.3 640.0,630.0C641.5,636.7 644.2,638.3 645.0,640.0" fill="none" stroke="#707070" stroke-width="2" stroke-linecap="round" filter="url(#b1)" opacity="0.7"/><path d="M842.0,642.0C836.0,646.2 812.0,662.8 806.0,667.0" fill="none" stroke="#939393" stroke-width="6" stroke-linecap="round" filter="url(#b1)" opacity="0.95"/><path d="M847.0,652.0C841.8,656.2 821.2,672.8 816.0,677.0" fill="none" stroke="#939393" stroke-width="6" stroke-linecap="round" filter="url(#b1)" opacity="0.95"/><path d="M855.0,659.0C851.5,662.8 837.5,678.2 834.0,682.0" fill="none" stroke="#939393" stroke-width="6" stroke-linecap="round" filter="url(#b1)" opacity="0.95"/><path d="M863.0,662.0C861.2,664.7 853.8,675.3 852.0,678.0" fill="none" stroke="#939393" stroke-width="6" stroke-linecap="round" filter="url(#b1)" opacity="0.95"/><path d="M846.0,647.0C840.3,651.2 817.7,667.8 812.0,672.0" fill="none" stroke="#686868" stroke-width="1.6" stroke-linecap="round" filter="url(#b1)" opacity="0.8"/><path d="M852.0,656.0C847.7,660.0 830.3,676.0 826.0,680.0" fill="none" stroke="#686868" stroke-width="1.6" stroke-linecap="round" filter="url(#b1)" opacity="0.8"/><path d="M860.0,661.0C857.3,664.3 846.7,677.7 844.0,681.0" fill="none" stroke="#686868" stroke-width="1.6" stroke-linecap="round" filter="url(#b1)" opacity="0.8"/><path d="M742.0,638.0C741.8,645.0 741.8,666.3 741.0,680.0C740.2,693.7 737.7,713.3 737.0,720.0" fill="none" stroke="#6a6a6a" stroke-width="1.4" stroke-linecap="round" filter="url(#b1)" opacity="0.8"/><path d="M753.0,690.0C760.8,691.5 784.7,696.8 800.0,699.0C815.3,701.2 837.5,702.3 845.0,703.0" fill="none" stroke="#747474" stroke-width="1.6" stroke-linecap="round" filter="url(#b1)" opacity="0.8"/><path d="M845.0,703.0C845.5,709.2 847.8,728.8 848.0,740.0C848.2,751.2 846.3,765.0 846.0,770.0" fill="none" stroke="#747474" stroke-width="1.4" stroke-linecap="round" filter="url(#b1)" opacity="0.7"/><path d="M740.0,722.0C748.3,723.3 775.0,727.0 790.0,730.0C805.0,733.0 823.3,738.3 830.0,740.0" fill="none" stroke="#646464" stroke-width="5" stroke-linecap="round" filter="url(#b2)" opacity="0.8"/><path d="M588.0,948.0C588.7,943.7 591.3,938.7 600.0,936.0C608.7,933.3 630.3,931.3 640.0,932.0C649.7,932.7 655.5,935.0 658.0,940.0C660.5,945.0 657.2,957.2 655.0,962.0C652.8,966.8 649.2,967.5 645.0,969.0C640.8,970.5 638.2,972.2 630.0,971.0C621.8,969.8 603.0,965.8 596.0,962.0C589.0,958.2 587.3,952.3 588.0,948.0Z" fill="#868686" filter="url(#b2)"/><path d="M820.0,967.0C822.0,962.7 830.0,958.8 840.0,958.0C850.0,957.2 870.0,958.3 880.0,962.0C890.0,965.7 895.5,973.8 900.0,980.0C904.5,986.2 906.2,993.7 907.0,999.0C907.8,1004.3 907.3,1009.8 905.0,1012.0C902.7,1014.2 898.8,1013.5 893.0,1012.0C887.2,1010.5 877.2,1006.0 870.0,1003.0C862.8,1000.0 857.0,997.2 850.0,994.0C843.0,990.8 833.0,988.5 828.0,984.0C823.0,979.5 818.0,971.3 820.0,967.0Z" fill="#808080" filter="url(#b2)"/></g>
</svg><!--/MODEL--></div>
<div id="ctx" class="a"><span>Context area</span></div>
<div id="tree" class="a"><div class="row" style="top:54px;background:#d4d0c8"></div><svg class="a" style="left:0;top:0" width="518" height="92" viewBox="1402 80 518 92"><defs><radialGradient id="g1" cx="0.4" cy="0.3" r="0.8"><stop offset="0" stop-color="#fff"/><stop offset="0.7" stop-color="#c0c0c0"/><stop offset="1" stop-color="#808080"/></radialGradient><radialGradient id="g2" cx="0.4" cy="0.3" r="0.8"><stop offset="0" stop-color="#b0b0b0"/><stop offset="0.7" stop-color="#686868"/><stop offset="1" stop-color="#404040"/></radialGradient><radialGradient id="g3" cx="0.4" cy="0.35" r="0.7"><stop offset="0" stop-color="#a0a8d0"/><stop offset="0.6" stop-color="#50609c"/><stop offset="1" stop-color="#283060"/></radialGradient></defs><g stroke="#808080" stroke-width="1" stroke-dasharray="1,1" fill="none"><path d="M1411.5,94 V161 M1412,161.5 H1421 M1415,89.5 H1422 M1428.5,98 V102 M1433,107.5 H1440 M1446.5,116 V120 M1451,125.5 H1458 M1464.5,134 V143 M1465,143.5 H1475"/></g><rect x="1406.5" y="85.5" width="8" height="8" fill="#fff" stroke="#808080"/><path d="M1408,89.5 h5" stroke="#000"/><rect x="1424.5" y="103.5" width="8" height="8" fill="#fff" stroke="#808080"/><path d="M1426,107.5 h5" stroke="#000"/><rect x="1442.5" y="121.5" width="8" height="8" fill="#fff" stroke="#808080"/><path d="M1444,125.5 h5" stroke="#000"/><circle cx="1431" cy="86" r="4.5" fill="url(#g2)"/><circle cx="1436" cy="90" r="4.5" fill="url(#g1)"/><circle cx="1429.5" cy="92" r="4.5" fill="url(#g1)"/><path d="M1451,99 l4,-1.5 l2,1 v6 l-4,2 z" fill="#e86810"/><circle cx="1450" cy="108" r="5.8" fill="url(#g2)"/><ellipse cx="1468.5" cy="107.5" rx="6" ry="4.2" fill="#fff" stroke="#f08020" stroke-width="1.8"/><ellipse cx="1468.5" cy="107" rx="2.8" ry="2" fill="#f08020"/><circle cx="1467" cy="123" r="6.5" fill="url(#g1)"/><rect x="1465.5" y="121" width="10.5" height="11" rx="1" fill="#2c48a0"/><path d="M1467,130 q6.5,-1 7.5,-7.5" stroke="#fff" stroke-width="1.6" fill="none"/><circle cx="1486" cy="143" r="7.5" fill="url(#g3)"/><path d="M1479,143 h14 M1486,136 v14 M1480,139.5 h12 M1480,146.5 h12 M1482.5,137 q-2,6 0,12 M1489.5,137 q2,6 0,12" stroke="#c8d0f0" stroke-width="0.7" fill="none" opacity="0.8"/><path d="M1424,155.5 h16 M1424,158.5 h16 M1424,161.5 h16 M1424,164.5 h16 M1424,167 h16" stroke="#404040" stroke-width="1.6"/><path d="M1901,94.8 v-8.5 l1.5,-1.5 h3.5 l1.5,2 h4.5 v8 z" fill="#e8861a"/><path d="M1901,94.8 l3.2,-5.8 h10.3 l-3.2,5.8 z" fill="#ffa43a"/><path d="M1908.5,86.5 q4.5,-1.5 6,2.5 l1.3,-0.6 l-0.8,4.2 l-3.8,-1.8 l1.3,-0.700 q-1,-2.3 -4,-1.8 z" fill="#8a8a8a" stroke="#505050" stroke-width="0.5"/><circle cx="1908.5" cy="107.5" r="5.8" fill="#fff" stroke="#8888a0" stroke-width="1.5"/><path d="M1906,105.0 l5,5 M1911,105.0 l-5,5" stroke="#f03010" stroke-width="1.7"/><circle cx="1908.5" cy="125.5" r="5.8" fill="#fff" stroke="#8888a0" stroke-width="1.5"/><path d="M1906,123.0 l5,5 M1911,123.0 l-5,5" stroke="#f03010" stroke-width="1.7"/><circle cx="1908.5" cy="143.5" r="5.8" fill="#fff" stroke="#8888a0" stroke-width="1.5"/><path d="M1906,141.0 l5,5 M1911,141.0 l-5,5" stroke="#f03010" stroke-width="1.7"/><path d="M1901,166.8 v-8.5 l1.5,-1.5 h3.5 l1.5,2 h4.5 v8 z" fill="#e8861a"/><path d="M1901,166.8 l3.2,-5.8 h10.3 l-3.2,5.8 z" fill="#ffa43a"/><path d="M1908.5,158.5 q4.5,-1.5 6,2.5 l1.3,-0.6 l-0.8,4.2 l-3.8,-1.8 l1.3,-0.700 q-1,-2.3 -4,-1.8 z" fill="#8a8a8a" stroke="#505050" stroke-width="0.5"/></svg><div class="row" style="top:0"><b style="left:44px">Parts</b></div><div class="row" style="top:18px"><span style="left:79px">ham_32_small_wall_1mm (100%)</span></div><div class="row" style="top:36px"><span style="left:79px">Part analysis</span></div><div class="row" style="top:54px"><span style="left:97px">Standard analysis</span></div><div class="row" style="top:72px"><b style="left:44px">Slices</b></div></div>
<div class="a" style="left:1400px;top:801px;width:520px;height:1px;background:#fff"></div><div class="a" style="left:1400px;top:802px;width:520px;height:2px;background:#d4d0c8"></div><div class="a" style="left:1400px;top:802px;width:2px;height:378px;background:#e8e6e0"></div><div class="a" style="left:1400px;top:1179px;width:520px;height:2px;background:#fff"></div><div class="a" style="left:1376px;top:1181px;width:544px;height:2px;background:#808080"></div>
<div class="a" style="left:1919px;top:80px;width:1px;height:720px;background:#ececec"></div>
<div id="ana" class="a"><div style="left:0;top:0;width:501px;height:94px;background:#0e2370"></div><div class="bx" style="left:100px;top:3px;width:126px;height:20px;border-color:#000814;"></div><div class="bx" style="left:225px;top:3px;width:127px;height:20px;border-color:#000814;"></div><div class="bx" style="left:351px;top:3px;width:127px;height:20px;border-color:#000814;"></div><div class="bx" style="left:5px;top:22px;width:96px;height:69px;border-color:#000814;"></div><div class="bx" style="left:100px;top:22px;width:126px;height:69px;border-color:#000814;"></div><div class="bx" style="left:225px;top:22px;width:127px;height:69px;border-color:#000814;"></div><div class="bx" style="left:351px;top:22px;width:127px;height:69px;border-color:#000814;"></div><div class="t c" style="left:100px;top:6px;width:125px;color:#fff;">X</div><div class="t c" style="left:225px;top:6px;width:126px;color:#fff;">Y</div><div class="t c" style="left:351px;top:6px;width:126px;color:#fff;">Z</div><div class="t " style="left:11px;top:26px;color:#fff;letter-spacing:-0.5px">Minimum:</div><div class="t c" style="left:100px;top:26px;width:125px;color:#fff;">-100.12</div><div class="t c" style="left:225px;top:26px;width:126px;color:#fff;">-0.24</div><div class="t c" style="left:351px;top:26px;width:126px;color:#fff;">-52.02</div><div class="t " style="left:11px;top:46px;color:#fff;letter-spacing:-0.5px">Maximum:</div><div class="t c" style="left:100px;top:46px;width:125px;color:#fff;">99.14</div><div class="t c" style="left:225px;top:46px;width:126px;color:#fff;">115.47</div><div class="t c" style="left:351px;top:46px;width:126px;color:#fff;">82.79</div><div class="t " style="left:11px;top:66px;color:#fff;">Size:</div><div class="t c" style="left:100px;top:66px;width:125px;color:#fff;">199.26</div><div class="t c" style="left:225px;top:66px;width:126px;color:#fff;">115.71</div><div class="t c" style="left:351px;top:66px;width:126px;color:#fff;">134.81</div><div class="bx" style="left:5px;top:95px;width:236px;height:25px;"></div><div class="bx" style="left:240px;top:95px;width:238px;height:25px;"></div><div class="t " style="left:11px;top:100px;">Volume:</div><div class="t r" style="left:98px;top:100px;width:132px;">49.2627 cm³</div><div class="t " style="left:251px;top:100px;">Area:</div><div class="t r" style="left:298px;top:100px;width:168px;">932.9338 cm²</div><div class="bx" style="left:5px;top:124px;width:236px;height:44px;"></div><div class="bx" style="left:240px;top:124px;width:238px;height:44px;"></div><div class="t " style="left:11px;top:128px;">Points:</div><div class="t r" style="left:98px;top:128px;width:132px;">1090696</div><div class="t " style="left:251px;top:128px;">Edges:</div><div class="t r" style="left:298px;top:128px;width:168px;">3272742</div><div class="t " style="left:11px;top:148px;">Triangles:</div><div class="t r" style="left:98px;top:148px;width:132px;">2181828</div><div class="t " style="left:251px;top:148px;">Shells:</div><div class="t r" style="left:298px;top:148px;width:168px;">122</div><div class="bx" style="left:5px;top:172px;width:236px;height:64px;"></div><div class="bx" style="left:240px;top:172px;width:238px;height:64px;"></div><div class="t " style="left:11px;top:176px;">Holes:</div><div class="t r" style="left:98px;top:176px;width:132px;">0</div><div class="t " style="left:251px;top:176px;">Bad edges:</div><div class="t r" style="left:298px;top:176px;width:168px;">0</div><div class="t " style="left:11px;top:196px;">Boundary edges:</div><div class="t r" style="left:98px;top:196px;width:132px;">0</div><div class="t " style="left:251px;top:196px;">Boundary Length:</div><div class="t r" style="left:298px;top:196px;width:168px;">0.00 mm</div><div class="t " style="left:11px;top:216px;">Flipped triangles:</div><div class="t r" style="left:98px;top:216px;width:132px;">0</div><div class="bx" style="left:5px;top:240px;width:473px;height:44px;"></div><div class="t " style="left:11px;top:244px;">Surface is closed:</div><div class="t r" style="left:298px;top:244px;width:168px;color:#108010;">Yes</div><div class="t " style="left:11px;top:264px;">Surface is orientable:</div><div class="t r" style="left:298px;top:264px;width:168px;color:#108010;">Yes</div><div class="bx" style="left:100px;top:288px;width:95px;height:19px;"></div><div class="bx" style="left:100px;top:306px;width:95px;height:91px;"></div><div class="t c" style="left:100px;top:291px;width:94px;">Min:</div><div class="bx" style="left:194px;top:288px;width:95px;height:19px;"></div><div class="bx" style="left:194px;top:306px;width:95px;height:91px;"></div><div class="t c" style="left:194px;top:291px;width:94px;">Max:</div><div class="bx" style="left:288px;top:288px;width:95px;height:19px;"></div><div class="bx" style="left:288px;top:306px;width:95px;height:91px;"></div><div class="t c" style="left:288px;top:291px;width:94px;">Ø:</div><div class="bx" style="left:382px;top:288px;width:96px;height:19px;"></div><div class="bx" style="left:382px;top:306px;width:96px;height:91px;"></div><div class="t c" style="left:382px;top:291px;width:95px;">Dev:</div><div class="bx" style="left:5px;top:306px;width:96px;height:91px;"></div><div class="t " style="left:11px;top:311px;">Edges/Point</div><div class="t c s" style="left:100px;top:311px;width:94px;">3.00</div><div class="t c s" style="left:194px;top:311px;width:94px;">41.00</div><div class="t c s" style="left:288px;top:311px;width:94px;">6.00</div><div class="t c s" style="left:382px;top:311px;width:95px;">1.08</div><div class="t " style="left:11px;top:331px;">Triangles/Edge</div><div class="t c s" style="left:100px;top:331px;width:94px;">2.00</div><div class="t c s" style="left:194px;top:331px;width:94px;">2.00</div><div class="t c s" style="left:288px;top:331px;width:94px;">2.00</div><div class="t c s" style="left:382px;top:331px;width:95px;">0.00</div><div class="t " style="left:11px;top:351px;">Triangle Quality</div><div class="t c s" style="left:100px;top:351px;width:94px;">0.00</div><div class="t c s" style="left:194px;top:351px;width:94px;">1.00</div><div class="t c s" style="left:288px;top:351px;width:94px;">0.76</div><div class="t c s" style="left:382px;top:351px;width:95px;">0.19</div><div class="t " style="left:11px;top:371px;">Edge Length</div><div class="t c s" style="left:100px;top:371px;width:94px;">0.01</div><div class="t c s" style="left:194px;top:371px;width:94px;">2.96</div><div class="t c s" style="left:288px;top:371px;width:94px;">0.15</div><div class="t c s" style="left:382px;top:371px;width:95px;">0.08</div></div>
<div id="sb" class="a"><div class="btn" style="top:0"><svg width="14" height="14"><path d="M3,8.5 h7 l-3.5,-3.5 z" fill="#000"/></svg></div><div class="btn" style="top:16px;height:286px"></div><div class="btn" style="top:359px;height:16px"><svg width="14" height="14"><path d="M3,5.5 h7 l-3.5,3.5 z" fill="#000"/></svg></div></div>
<div class="a" style="left:7px;top:1185px;width:12px;height:12px;border-radius:6px;background:#f01010"></div><div class="sunk" style="left:23px;width:198px;top:1185px;height:16px"></div><div class="sunk" style="left:223px;width:498px;top:1185px;height:16px"></div><div class="sunk" style="left:723px;width:1175px;top:1185px;height:16px"></div><div class="sunk" style="left:748px;width:1149px;top:1188px;height:12px"></div><svg class="a" style="left:1904px;top:1186px" width="16" height="14"><path d="M15,1 L2,14 M15,5 L6,14 M15,9 L10,14" stroke="#808080" stroke-width="1.6"/><path d="M15,2.2 L3.2,14 M15,6.2 L7.2,14 M15,10.2 L11.2,14" stroke="#fff" stroke-width="0.8"/></svg>
</body></html>
